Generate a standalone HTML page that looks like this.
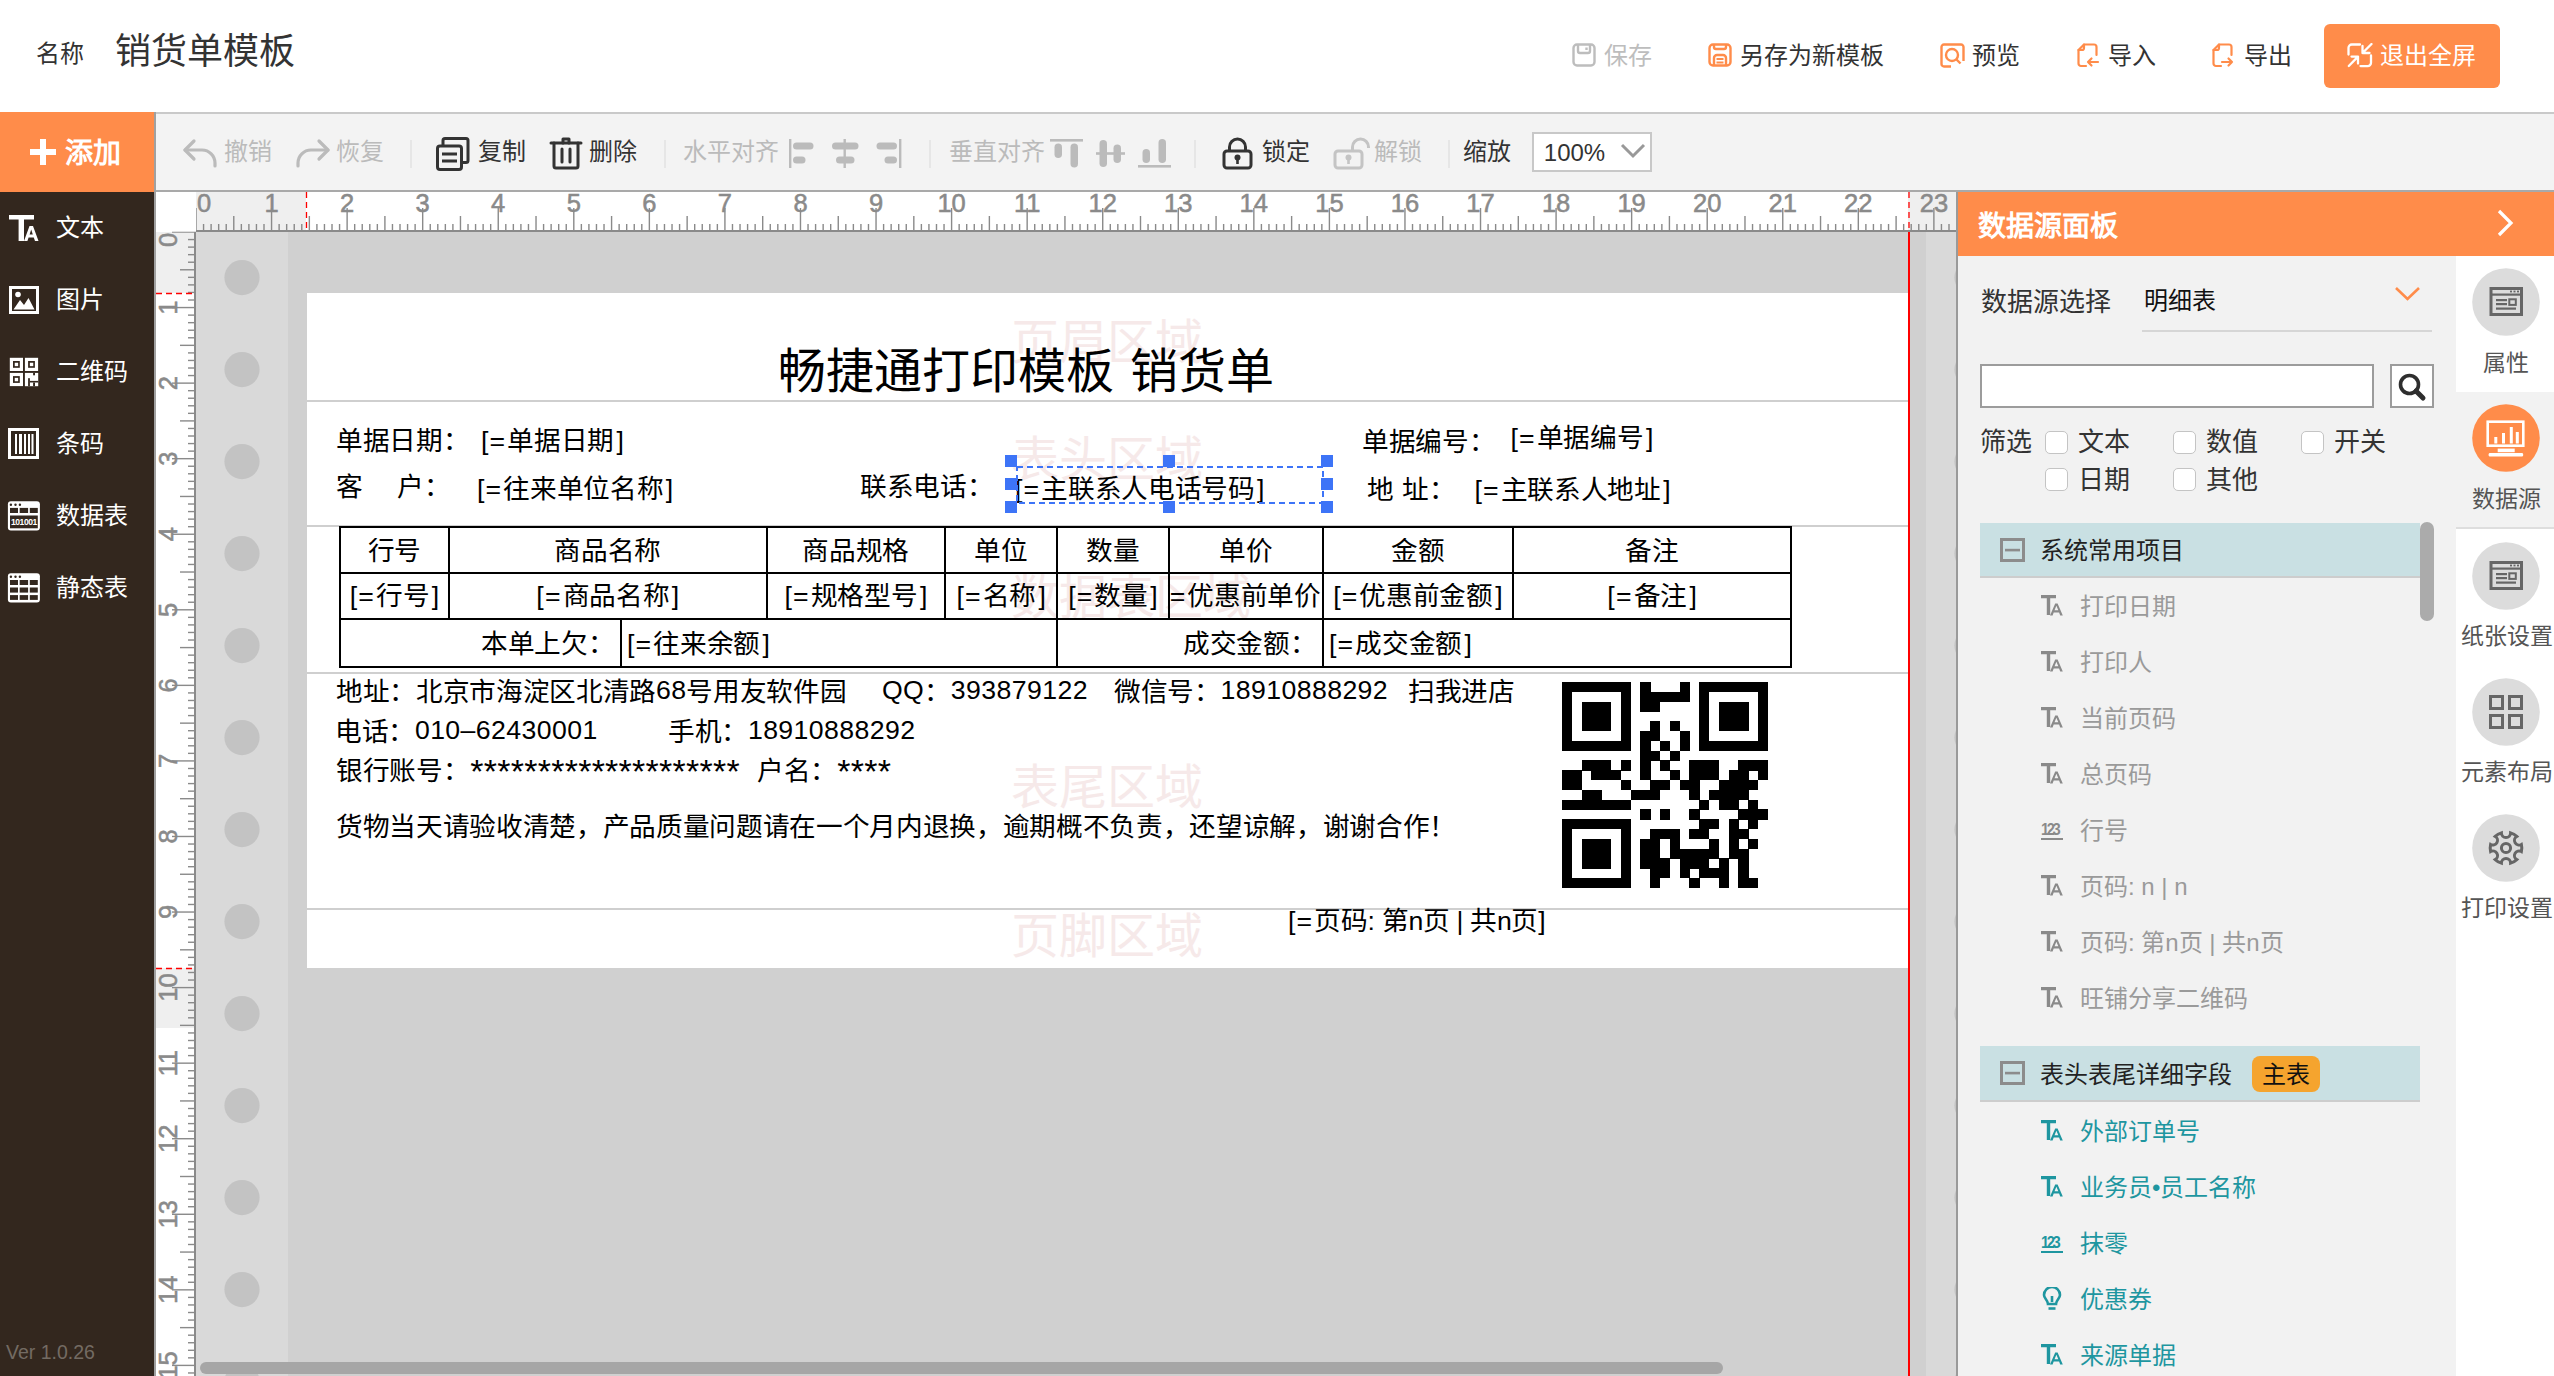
<!DOCTYPE html>
<html lang="zh-CN"><head><meta charset="utf-8"><title>销货单模板</title>
<style>
html,body{margin:0;padding:0;}
body{width:2554px;height:1376px;overflow:hidden;position:relative;background:#fff;font-family:"Liberation Sans",sans-serif;}
body>div,body>svg{position:absolute;}
.t{position:absolute;line-height:1;white-space:nowrap;}
.p{letter-spacing:-0.33px;}
</style></head><body>
<div style="left:0px;top:0px;width:2554px;height:112px;background:#fff;"></div>
<div style="left:0px;top:112px;width:2554px;height:2px;background:#c9c9c9;"></div>
<div style="left:0px;top:114px;width:2554px;height:76px;background:#f3f3f3;"></div>
<div style="left:0px;top:190px;width:2554px;height:2px;background:#a9a9a9;"></div>
<div style="left:0px;top:112px;width:154px;height:80px;background:#ff8c4a;"></div>
<div style="left:0px;top:192px;width:154px;height:1184px;background:#33271e;"></div>
<div style="left:154px;top:112px;width:2px;height:1264px;background:#a0a0a0;"></div>
<div class="t" style="left:36.0px;top:42.0px;font-size:24px;color:#333;">名称</div>
<div class="t" style="left:114.6px;top:34.0px;font-size:36px;color:#333;">销货单模板</div>
<svg style="position:absolute;left:1572px;top:43px;" width="24" height="24" viewBox="0 0 24 24"><g fill="none" stroke="#bdbdbd" stroke-width="2.4" stroke-linejoin="round"><rect x="1.5" y="1.5" width="21" height="21" rx="3.5"/><path d="M6 1.5 V8 a2 2 0 0 0 2 2 H16 a2 2 0 0 0 2 -2 V1.5"/><path d="M14.5 4.5 V7"/></g></svg>
<div class="t" style="left:1604.0px;top:44.0px;font-size:24px;color:#bdbdbd;">保存</div>
<svg style="position:absolute;left:1708px;top:43px;" width="24" height="24" viewBox="0 0 24 24"><g fill="none" stroke="#ff8c4a" stroke-width="2.4" stroke-linejoin="round"><rect x="1.5" y="1.5" width="21" height="21" rx="3.5"/><path d="M6 1.5 V4 a2 2 0 0 0 2 2 H16 a2 2 0 0 0 2 -2 V1.5"/><path d="M6 22.5 V15 a3 3 0 0 1 3 -3 H15 a3 3 0 0 1 3 3 V22.5"/><path d="M8.5 16 H15.5 M8.5 19.5 H15.5" stroke-width="2"/></g></svg>
<div class="t" style="left:1740.0px;top:44.0px;font-size:24px;color:#333;">另存为新模板</div>
<svg style="position:absolute;left:1940px;top:43px;" width="25" height="25" viewBox="0 0 25 25"><g fill="none" stroke="#ff8c4a" stroke-width="2.4"><path d="M11 23.5 H4 a2.5 2.5 0 0 1 -2.5 -2.5 V4 a2.5 2.5 0 0 1 2.5 -2.5 H21 a2.5 2.5 0 0 1 2.5 2.5 V18"/><circle cx="12" cy="12" r="6"/><path d="M16.5 16.5 L20.5 20.5"/></g></svg>
<div class="t" style="left:1972.0px;top:44.0px;font-size:24px;color:#333;">预览</div>
<svg style="position:absolute;left:2077px;top:43px;" width="24" height="25" viewBox="0 0 24 25"><g fill="none" stroke="#ff8c4a" stroke-width="2.2" stroke-linejoin="round" stroke-linecap="round"><path d="M9 23 H4 a2.5 2.5 0 0 1 -2.5 -2.5 V7 L7 1.5 H17 a2.5 2.5 0 0 1 2.5 2.5 V12"/><path d="M7 1.5 V5 a2 2 0 0 1 -2 2 H1.5"/><path d="M21 19 H11 M14.5 15.5 L11 19 L14.5 22.5"/></g></svg>
<div class="t" style="left:2108.0px;top:44.0px;font-size:24px;color:#333;">导入</div>
<svg style="position:absolute;left:2212px;top:43px;" width="24" height="25" viewBox="0 0 24 25"><g fill="none" stroke="#ff8c4a" stroke-width="2.2" stroke-linejoin="round" stroke-linecap="round"><path d="M9 23 H4 a2.5 2.5 0 0 1 -2.5 -2.5 V7 L7 1.5 H17 a2.5 2.5 0 0 1 2.5 2.5 V12"/><path d="M7 1.5 V5 a2 2 0 0 1 -2 2 H1.5"/><path d="M10 19 H20 M16.5 15.5 L20 19 L16.5 22.5"/></g></svg>
<div class="t" style="left:2244.0px;top:44.0px;font-size:24px;color:#333;">导出</div>
<div style="left:2324px;top:24px;width:176px;height:64px;background:#ff8c4a;border-radius:6px;"></div>
<svg style="position:absolute;left:2347px;top:43px;" width="26" height="25" viewBox="0 0 26 25"><g fill="none" stroke="#fff" stroke-width="2.3" stroke-linecap="round" stroke-linejoin="round"><path d="M1.5 11.5 V4.8 a3.3 3.3 0 0 1 3.3 -3.3 H13"/><path d="M24 12.5 V19.8 a3.3 3.3 0 0 1 -3.3 3.3 H13.5"/><path d="M24.5 1 L15.5 10 M15.5 3 V10 H22.5"/><path d="M1.8 23 L11 13.6 M4.5 13.6 H11 V20.5"/></g></svg>
<div class="t" style="left:2380.0px;top:44.0px;font-size:24px;color:#fff;">退出全屏</div>
<svg style="position:absolute;left:30px;top:139px;" width="26" height="26" viewBox="0 0 26 26"><path d="M10 0 H16 V10 H26 V16 H16 V26 H10 V16 H0 V10 H10 Z" fill="#fff"/></svg>
<div class="t" style="left:64.9px;top:140.0px;font-size:28px;color:#fff;font-weight:bold;">添加</div>
<svg style="position:absolute;left:182px;top:138px;" width="38" height="32" viewBox="0 0 38 32"><g fill="none" stroke="#bbbbbb" stroke-width="3.2" stroke-linecap="round" stroke-linejoin="round"><path d="M12 3 L3 12 L12 21"/><path d="M3 12 H20 a13 13 0 0 1 13 13 V28"/></g></svg>
<div class="t" style="left:224.0px;top:140.0px;font-size:24px;color:#bbbbbb;">撤销</div>
<svg style="position:absolute;left:295px;top:138px;" width="38" height="32" viewBox="0 0 38 32"><g fill="none" stroke="#bbbbbb" stroke-width="3.2" stroke-linecap="round" stroke-linejoin="round"><path d="M24 3 L33 12 L24 21"/><path d="M33 12 H16 a13 13 0 0 0 -13 13 V28"/></g></svg>
<div class="t" style="left:336.0px;top:140.0px;font-size:24px;color:#bbbbbb;">恢复</div>
<div style="left:410px;top:140px;width:2px;height:28px;background:#e6e6e6;"></div>
<svg style="position:absolute;left:436px;top:137px;" width="34" height="34" viewBox="0 0 34 34"><g fill="none" stroke="#333333" stroke-width="3" stroke-linejoin="round"><rect x="1.5" y="9" width="24" height="23.5" rx="2.5"/><path d="M7 9 V3.5 a2 2 0 0 1 2 -2 H30 a2 2 0 0 1 2 2 V23.5 a2 2 0 0 1 -2 2 H25.5"/><path d="M6 17 H21 M6 24 H21"/></g></svg>
<div class="t" style="left:478.0px;top:140.0px;font-size:24px;color:#333333;">复制</div>
<svg style="position:absolute;left:549px;top:137px;" width="34" height="33" viewBox="0 0 34 33"><g fill="none" stroke="#333333" stroke-width="3" stroke-linejoin="round" stroke-linecap="round"><path d="M2 6 H32"/><path d="M14 6 V2 H20 V6"/><path d="M5 6 V29 a2 2 0 0 0 2 2 H27 a2 2 0 0 0 2 -2 V6"/><path d="M13 12 V25 M21 12 V25"/></g></svg>
<div class="t" style="left:589.0px;top:140.0px;font-size:24px;color:#333333;">删除</div>
<div style="left:664px;top:140px;width:2px;height:28px;background:#e6e6e6;"></div>
<div class="t" style="left:683.0px;top:140.0px;font-size:24px;color:#bbbbbb;">水平对齐</div>
<svg style="position:absolute;left:788px;top:138px;" width="28" height="32" viewBox="0 0 28 32"><g fill="#bbbbbb"><rect x="1" y="1" width="2.4" height="29"/><rect x="5" y="4.5" width="20.5" height="7" rx="3.5"/><rect x="5" y="18.5" width="12.5" height="7" rx="3.5"/></g></svg>
<svg style="position:absolute;left:830px;top:138px;" width="30" height="32" viewBox="0 0 30 32"><g fill="#bbbbbb"><rect x="13.5" y="1" width="2.4" height="29"/><rect x="2" y="4.5" width="26.5" height="7" rx="3.5"/><rect x="6" y="18.5" width="18.5" height="7" rx="3.5"/></g></svg>
<svg style="position:absolute;left:875px;top:138px;" width="28" height="32" viewBox="0 0 28 32"><g fill="#bbbbbb"><rect x="24" y="1" width="2.4" height="29"/><rect x="1.5" y="4.5" width="20.5" height="7" rx="3.5"/><rect x="9.5" y="18.5" width="12.5" height="7" rx="3.5"/></g></svg>
<div style="left:929px;top:140px;width:2px;height:28px;background:#e6e6e6;"></div>
<div class="t" style="left:949.0px;top:140.0px;font-size:24px;color:#bbbbbb;">垂直对齐</div>
<svg style="position:absolute;left:1049px;top:138px;" width="36" height="32" viewBox="0 0 36 32"><g fill="#bbbbbb"><rect x="1" y="1" width="33" height="2.6"/><rect x="5.5" y="5.5" width="7.5" height="14.5" rx="3.75"/><rect x="21.5" y="5.5" width="7.5" height="24" rx="3.75"/></g></svg>
<svg style="position:absolute;left:1095px;top:138px;" width="32" height="32" viewBox="0 0 32 32"><g fill="#bbbbbb"><rect x="1" y="14.2" width="29" height="2.6"/><rect x="4.5" y="2" width="7.5" height="27" rx="3.75"/><rect x="18.5" y="6.5" width="7.5" height="18.5" rx="3.75"/></g></svg>
<svg style="position:absolute;left:1137px;top:138px;" width="36" height="32" viewBox="0 0 36 32"><g fill="#bbbbbb"><rect x="1" y="27" width="33" height="2.6"/><rect x="5.5" y="11" width="7.5" height="14" rx="3.75"/><rect x="21.5" y="1" width="7.5" height="24" rx="3.75"/></g></svg>
<div style="left:1194px;top:140px;width:2px;height:28px;background:#e6e6e6;"></div>
<svg style="position:absolute;left:1222px;top:137px;" width="32" height="33" viewBox="0 0 32 33"><g fill="none" stroke="#333333" stroke-width="3" stroke-linejoin="round"><rect x="2" y="14" width="27" height="17" rx="3"/><path d="M7.5 14 V10 a8 8 0 0 1 16 0 V14"/></g><circle cx="15.5" cy="20.5" r="3" fill="#333333"/><rect x="14.2" y="21" width="2.6" height="6" fill="#333333"/></svg>
<div class="t" style="left:1262.0px;top:140.0px;font-size:24px;color:#333333;">锁定</div>
<svg style="position:absolute;left:1333px;top:137px;" width="37" height="33" viewBox="0 0 37 33"><g fill="none" stroke="#c4c4c4" stroke-width="3" stroke-linejoin="round"><rect x="2" y="14" width="27" height="17" rx="3"/><path d="M19.5 14 V10 a8 8 0 0 1 16 0 V11"/></g><circle cx="15.5" cy="20.5" r="3" fill="#c4c4c4"/><rect x="14.2" y="21" width="2.6" height="6" fill="#c4c4c4"/></svg>
<div class="t" style="left:1374.0px;top:140.0px;font-size:24px;color:#bbbbbb;">解锁</div>
<div style="left:1448px;top:140px;width:2px;height:28px;background:#e6e6e6;"></div>
<div class="t" style="left:1463.0px;top:140.0px;font-size:24px;color:#333333;">缩放</div>
<div style="left:1532px;top:132px;width:120px;height:40px;background:#fff;box-sizing:border-box;border:2px solid #c8c8c8;"></div>
<div class="t" style="left:1543.8px;top:140.9px;font-size:24px;color:#333333;">100%</div>
<svg style="position:absolute;left:1620px;top:143px;" width="26" height="16" viewBox="0 0 26 16"><path d="M2 2 L13 13 L24 2" fill="none" stroke="#999" stroke-width="3"/></svg>
<svg style="position:absolute;left:9px;top:215px;" width="32" height="28" viewBox="0 0 32 28"><g fill="#ffffff" transform="scale(1.0)"><path d="M0 0 H25 V4.6 H15 V26 H9.6 V4.6 H0 Z"/><path d="M20.5 11 H24 L29.5 26 H26 L24.8 22.5 H19.6 L18.4 26 H15 Z M20.6 19.5 H23.8 L22.2 14.6 Z"/></g></svg>
<div class="t" style="left:56.0px;top:216.0px;font-size:24px;color:#ffffff;">文本</div>
<svg style="position:absolute;left:9px;top:286px;" width="31" height="29" viewBox="0 0 31 29"><g fill="none" stroke="#ffffff" stroke-width="3"><rect x="1.5" y="1.5" width="27" height="25"/></g><circle cx="9" cy="8.5" r="2.8" fill="#ffffff"/><path d="M4.5 23.5 L11 14 L15 19 L19.5 12 L25.5 23.5 Z" fill="#ffffff"/></svg>
<div class="t" style="left:56.0px;top:288.0px;font-size:24px;color:#ffffff;">图片</div>
<svg style="position:absolute;left:9px;top:357px;" width="31" height="31" viewBox="0 0 31 31"><rect x="0.8" y="0.8" width="13.2" height="13.2" fill="#fff"/><rect x="4.0" y="4.0" width="6.8" height="6.8" fill="#33271e"/><rect x="5.75" y="5.75" width="3.4" height="3.4" fill="#fff"/><rect x="15.9" y="0.8" width="13.2" height="13.2" fill="#fff"/><rect x="19.1" y="4.0" width="6.8" height="6.8" fill="#33271e"/><rect x="20.85" y="5.75" width="3.4" height="3.4" fill="#fff"/><rect x="0.8" y="15.9" width="13.2" height="13.2" fill="#fff"/><rect x="4.0" y="19.1" width="6.8" height="6.8" fill="#33271e"/><rect x="5.75" y="20.85" width="3.4" height="3.4" fill="#fff"/><rect x="15.9" y="15.9" width="13.3" height="13.3" fill="#fff"/><g fill="#33271e"><rect x="24.1" y="15.9" width="1.9" height="2.4"/><rect x="19.1" y="21.2" width="1.8" height="8"/><rect x="20.9" y="23.9" width="8.3" height="1.6"/><rect x="24.1" y="25.5" width="1.9" height="3.7"/></g></svg>
<div class="t" style="left:56.0px;top:360.0px;font-size:24px;color:#ffffff;">二维码</div>
<svg style="position:absolute;left:8px;top:428px;" width="32" height="32" viewBox="0 0 32 32"><g fill="none" stroke="#ffffff" stroke-width="3"><rect x="1.5" y="1.5" width="28" height="28"/></g><g fill="#ffffff"><rect x="7" y="6" width="2" height="20"/><rect x="11" y="6" width="3" height="20"/><rect x="16" y="6" width="2" height="20"/><rect x="20" y="6" width="2" height="20"/><rect x="23.5" y="6" width="2" height="20"/></g></svg>
<div class="t" style="left:56.0px;top:432.0px;font-size:24px;color:#ffffff;">条码</div>
<svg style="position:absolute;left:7px;top:500px;" width="34" height="32" viewBox="0 0 34 32"><rect x="0.9" y="1.2" width="32" height="29.4" rx="3" fill="#fff"/><g fill="#33271e"><circle cx="3.9" cy="4.8" r="1.2"/><circle cx="8.5" cy="4.8" r="1.2"/><circle cx="12.9" cy="4.8" r="1.2"/><rect x="3.0" y="7.9" width="8.0" height="5.1"/><rect x="12.7" y="7.9" width="8.400000000000002" height="5.1"/><rect x="22.8" y="7.9" width="8.0" height="5.1"/><rect x="3.0" y="15.5" width="27.8" height="12.8"/></g><text x="16.9" y="25.4" font-size="8.6" font-weight="bold" fill="#fff" text-anchor="middle" letter-spacing="-0.45" font-family="Liberation Sans">101001</text></svg>
<div class="t" style="left:56.0px;top:504.0px;font-size:24px;color:#ffffff;">数据表</div>
<svg style="position:absolute;left:7px;top:572px;" width="34" height="32" viewBox="0 0 34 32"><rect x="0.9" y="1.2" width="32" height="29.4" rx="3" fill="#fff"/><g fill="#33271e"><circle cx="3.9" cy="4.8" r="1.2"/><circle cx="8.5" cy="4.8" r="1.2"/><circle cx="12.9" cy="4.8" r="1.2"/><rect x="3.0" y="8.0" width="8.0" height="5.0"/><rect x="12.7" y="8.0" width="8.400000000000002" height="5.0"/><rect x="22.8" y="8.0" width="8.0" height="5.0"/><rect x="3.0" y="15.5" width="8.0" height="5.100000000000001"/><rect x="12.7" y="15.5" width="8.400000000000002" height="5.100000000000001"/><rect x="22.8" y="15.5" width="8.0" height="5.100000000000001"/><rect x="3.0" y="23.1" width="8.0" height="4.799999999999997"/><rect x="12.7" y="23.1" width="8.400000000000002" height="4.799999999999997"/><rect x="22.8" y="23.1" width="8.0" height="4.799999999999997"/></g></svg>
<div class="t" style="left:56.0px;top:576.0px;font-size:24px;color:#ffffff;">静态表</div>
<div class="t" style="left:6.0px;top:1342.8px;font-size:19.5px;color:#736b63;">Ver 1.0.26</div>
<div style="left:156px;top:192px;width:1800px;height:1184px;background:#d0d0d0;"></div>
<div style="left:196px;top:232px;width:92px;height:1144px;background:#d9d9d9;"></div>
<div style="left:1926px;top:232px;width:30px;height:1144px;background:#d9d9d9;"></div>
<svg style="position:absolute;left:196px;top:232px;" width="92" height="1144" viewBox="0 0 92 1144"><circle cx="46" cy="45.6" r="17.6" fill="#c3c3c3"/><circle cx="46" cy="137.6" r="17.6" fill="#c3c3c3"/><circle cx="46" cy="229.6" r="17.6" fill="#c3c3c3"/><circle cx="46" cy="321.6" r="17.6" fill="#c3c3c3"/><circle cx="46" cy="413.6" r="17.6" fill="#c3c3c3"/><circle cx="46" cy="505.6" r="17.6" fill="#c3c3c3"/><circle cx="46" cy="597.6" r="17.6" fill="#c3c3c3"/><circle cx="46" cy="689.6" r="17.6" fill="#c3c3c3"/><circle cx="46" cy="781.6" r="17.6" fill="#c3c3c3"/><circle cx="46" cy="873.6" r="17.6" fill="#c3c3c3"/><circle cx="46" cy="965.6" r="17.6" fill="#c3c3c3"/><circle cx="46" cy="1057.6" r="17.6" fill="#c3c3c3"/><circle cx="46" cy="1149.6" r="17.6" fill="#c3c3c3"/></svg>
<svg style="position:absolute;left:1926px;top:232px;overflow:hidden;" width="30" height="1144" viewBox="0 0 30 1144"><circle cx="46" cy="45.6" r="17.6" fill="#c3c3c3"/><circle cx="46" cy="137.6" r="17.6" fill="#c3c3c3"/><circle cx="46" cy="229.6" r="17.6" fill="#c3c3c3"/><circle cx="46" cy="321.6" r="17.6" fill="#c3c3c3"/><circle cx="46" cy="413.6" r="17.6" fill="#c3c3c3"/><circle cx="46" cy="505.6" r="17.6" fill="#c3c3c3"/><circle cx="46" cy="597.6" r="17.6" fill="#c3c3c3"/><circle cx="46" cy="689.6" r="17.6" fill="#c3c3c3"/><circle cx="46" cy="781.6" r="17.6" fill="#c3c3c3"/><circle cx="46" cy="873.6" r="17.6" fill="#c3c3c3"/><circle cx="46" cy="965.6" r="17.6" fill="#c3c3c3"/><circle cx="46" cy="1057.6" r="17.6" fill="#c3c3c3"/><circle cx="46" cy="1149.6" r="17.6" fill="#c3c3c3"/></svg>
<div style="left:307px;top:293px;width:1601px;height:675px;background:#fff;"></div>
<div class="t" style="left:1011.1px;top:319.0px;font-size:48px;color:#f6e9e9;">页眉区域</div>
<div class="t" style="left:1011.1px;top:436.0px;font-size:48px;color:#f6e9e9;">表头区域</div>
<div class="t" style="left:1011.1px;top:574.0px;font-size:48px;color:#f6e9e9;">数据表区域</div>
<div class="t" style="left:1011.1px;top:764.0px;font-size:48px;color:#f6e9e9;">表尾区域</div>
<div class="t" style="left:1011.1px;top:913.0px;font-size:48px;color:#f6e9e9;">页脚区域</div>
<div style="left:307px;top:400px;width:1601px;height:2px;background:#cfcfcf;"></div>
<div style="left:307px;top:525px;width:1601px;height:2px;background:#cfcfcf;"></div>
<div style="left:307px;top:672px;width:1601px;height:2px;background:#cfcfcf;"></div>
<div style="left:307px;top:908px;width:1601px;height:2px;background:#cfcfcf;"></div>
<div style="left:339px;top:525.8px;width:1453.3px;height:2px;background:#000;"></div>
<div style="left:339px;top:572px;width:1453.3px;height:2px;background:#000;"></div>
<div style="left:339px;top:618px;width:1453.3px;height:2px;background:#000;"></div>
<div style="left:339px;top:666px;width:1453.3px;height:2px;background:#000;"></div>
<div style="left:339px;top:525.8px;width:2px;height:142.20000000000005px;background:#000;"></div>
<div style="left:1790.3px;top:525.8px;width:2px;height:142.20000000000005px;background:#000;"></div>
<div style="left:447.6px;top:525.8px;width:2px;height:92.20000000000005px;background:#000;"></div>
<div style="left:765.6px;top:525.8px;width:2px;height:92.20000000000005px;background:#000;"></div>
<div style="left:944px;top:525.8px;width:2px;height:92.20000000000005px;background:#000;"></div>
<div style="left:1056px;top:525.8px;width:2px;height:92.20000000000005px;background:#000;"></div>
<div style="left:1167.5px;top:525.8px;width:2px;height:92.20000000000005px;background:#000;"></div>
<div style="left:1322px;top:525.8px;width:2px;height:92.20000000000005px;background:#000;"></div>
<div style="left:1511.6px;top:525.8px;width:2px;height:92.20000000000005px;background:#000;"></div>
<div style="left:619.6px;top:618px;width:2px;height:48px;background:#000;"></div>
<div style="left:1056px;top:618px;width:2px;height:48px;background:#000;"></div>
<div style="left:1322px;top:618px;width:2px;height:48px;background:#000;"></div>
<svg style="position:absolute;left:156px;top:192px;" width="1800" height="40" viewBox="0 0 1800 40"><rect x="0" y="0" width="1800" height="40" fill="#fff"/><rect x="40" y="0" width="110" height="38" fill="#efefef"/><rect x="1752" y="0" width="48" height="38" fill="#efefef"/><rect x="40" y="38" width="1760" height="2" fill="#8a8a8a"/><rect x="39.30" y="16" width="1.4" height="22" fill="#8a8a8a"/><rect x="46.86" y="32" width="1.4" height="6" fill="#8a8a8a"/><rect x="54.41" y="32" width="1.4" height="6" fill="#8a8a8a"/><rect x="61.97" y="32" width="1.4" height="6" fill="#8a8a8a"/><rect x="69.52" y="32" width="1.4" height="6" fill="#8a8a8a"/><rect x="77.08" y="24" width="1.4" height="14" fill="#8a8a8a"/><rect x="84.64" y="32" width="1.4" height="6" fill="#8a8a8a"/><rect x="92.19" y="32" width="1.4" height="6" fill="#8a8a8a"/><rect x="99.75" y="32" width="1.4" height="6" fill="#8a8a8a"/><rect x="107.30" y="32" width="1.4" height="6" fill="#8a8a8a"/><rect x="114.86" y="16" width="1.4" height="22" fill="#8a8a8a"/><rect x="122.42" y="32" width="1.4" height="6" fill="#8a8a8a"/><rect x="129.97" y="32" width="1.4" height="6" fill="#8a8a8a"/><rect x="137.53" y="32" width="1.4" height="6" fill="#8a8a8a"/><rect x="145.08" y="32" width="1.4" height="6" fill="#8a8a8a"/><rect x="152.64" y="24" width="1.4" height="14" fill="#8a8a8a"/><rect x="160.20" y="32" width="1.4" height="6" fill="#8a8a8a"/><rect x="167.75" y="32" width="1.4" height="6" fill="#8a8a8a"/><rect x="175.31" y="32" width="1.4" height="6" fill="#8a8a8a"/><rect x="182.86" y="32" width="1.4" height="6" fill="#8a8a8a"/><rect x="190.42" y="16" width="1.4" height="22" fill="#8a8a8a"/><rect x="197.98" y="32" width="1.4" height="6" fill="#8a8a8a"/><rect x="205.53" y="32" width="1.4" height="6" fill="#8a8a8a"/><rect x="213.09" y="32" width="1.4" height="6" fill="#8a8a8a"/><rect x="220.64" y="32" width="1.4" height="6" fill="#8a8a8a"/><rect x="228.20" y="24" width="1.4" height="14" fill="#8a8a8a"/><rect x="235.76" y="32" width="1.4" height="6" fill="#8a8a8a"/><rect x="243.31" y="32" width="1.4" height="6" fill="#8a8a8a"/><rect x="250.87" y="32" width="1.4" height="6" fill="#8a8a8a"/><rect x="258.42" y="32" width="1.4" height="6" fill="#8a8a8a"/><rect x="265.98" y="16" width="1.4" height="22" fill="#8a8a8a"/><rect x="273.54" y="32" width="1.4" height="6" fill="#8a8a8a"/><rect x="281.09" y="32" width="1.4" height="6" fill="#8a8a8a"/><rect x="288.65" y="32" width="1.4" height="6" fill="#8a8a8a"/><rect x="296.20" y="32" width="1.4" height="6" fill="#8a8a8a"/><rect x="303.76" y="24" width="1.4" height="14" fill="#8a8a8a"/><rect x="311.32" y="32" width="1.4" height="6" fill="#8a8a8a"/><rect x="318.87" y="32" width="1.4" height="6" fill="#8a8a8a"/><rect x="326.43" y="32" width="1.4" height="6" fill="#8a8a8a"/><rect x="333.98" y="32" width="1.4" height="6" fill="#8a8a8a"/><rect x="341.54" y="16" width="1.4" height="22" fill="#8a8a8a"/><rect x="349.10" y="32" width="1.4" height="6" fill="#8a8a8a"/><rect x="356.65" y="32" width="1.4" height="6" fill="#8a8a8a"/><rect x="364.21" y="32" width="1.4" height="6" fill="#8a8a8a"/><rect x="371.76" y="32" width="1.4" height="6" fill="#8a8a8a"/><rect x="379.32" y="24" width="1.4" height="14" fill="#8a8a8a"/><rect x="386.88" y="32" width="1.4" height="6" fill="#8a8a8a"/><rect x="394.43" y="32" width="1.4" height="6" fill="#8a8a8a"/><rect x="401.99" y="32" width="1.4" height="6" fill="#8a8a8a"/><rect x="409.54" y="32" width="1.4" height="6" fill="#8a8a8a"/><rect x="417.10" y="16" width="1.4" height="22" fill="#8a8a8a"/><rect x="424.66" y="32" width="1.4" height="6" fill="#8a8a8a"/><rect x="432.21" y="32" width="1.4" height="6" fill="#8a8a8a"/><rect x="439.77" y="32" width="1.4" height="6" fill="#8a8a8a"/><rect x="447.32" y="32" width="1.4" height="6" fill="#8a8a8a"/><rect x="454.88" y="24" width="1.4" height="14" fill="#8a8a8a"/><rect x="462.44" y="32" width="1.4" height="6" fill="#8a8a8a"/><rect x="469.99" y="32" width="1.4" height="6" fill="#8a8a8a"/><rect x="477.55" y="32" width="1.4" height="6" fill="#8a8a8a"/><rect x="485.10" y="32" width="1.4" height="6" fill="#8a8a8a"/><rect x="492.66" y="16" width="1.4" height="22" fill="#8a8a8a"/><rect x="500.22" y="32" width="1.4" height="6" fill="#8a8a8a"/><rect x="507.77" y="32" width="1.4" height="6" fill="#8a8a8a"/><rect x="515.33" y="32" width="1.4" height="6" fill="#8a8a8a"/><rect x="522.88" y="32" width="1.4" height="6" fill="#8a8a8a"/><rect x="530.44" y="24" width="1.4" height="14" fill="#8a8a8a"/><rect x="538.00" y="32" width="1.4" height="6" fill="#8a8a8a"/><rect x="545.55" y="32" width="1.4" height="6" fill="#8a8a8a"/><rect x="553.11" y="32" width="1.4" height="6" fill="#8a8a8a"/><rect x="560.66" y="32" width="1.4" height="6" fill="#8a8a8a"/><rect x="568.22" y="16" width="1.4" height="22" fill="#8a8a8a"/><rect x="575.78" y="32" width="1.4" height="6" fill="#8a8a8a"/><rect x="583.33" y="32" width="1.4" height="6" fill="#8a8a8a"/><rect x="590.89" y="32" width="1.4" height="6" fill="#8a8a8a"/><rect x="598.44" y="32" width="1.4" height="6" fill="#8a8a8a"/><rect x="606.00" y="24" width="1.4" height="14" fill="#8a8a8a"/><rect x="613.56" y="32" width="1.4" height="6" fill="#8a8a8a"/><rect x="621.11" y="32" width="1.4" height="6" fill="#8a8a8a"/><rect x="628.67" y="32" width="1.4" height="6" fill="#8a8a8a"/><rect x="636.22" y="32" width="1.4" height="6" fill="#8a8a8a"/><rect x="643.78" y="16" width="1.4" height="22" fill="#8a8a8a"/><rect x="651.34" y="32" width="1.4" height="6" fill="#8a8a8a"/><rect x="658.89" y="32" width="1.4" height="6" fill="#8a8a8a"/><rect x="666.45" y="32" width="1.4" height="6" fill="#8a8a8a"/><rect x="674.00" y="32" width="1.4" height="6" fill="#8a8a8a"/><rect x="681.56" y="24" width="1.4" height="14" fill="#8a8a8a"/><rect x="689.12" y="32" width="1.4" height="6" fill="#8a8a8a"/><rect x="696.67" y="32" width="1.4" height="6" fill="#8a8a8a"/><rect x="704.23" y="32" width="1.4" height="6" fill="#8a8a8a"/><rect x="711.78" y="32" width="1.4" height="6" fill="#8a8a8a"/><rect x="719.34" y="16" width="1.4" height="22" fill="#8a8a8a"/><rect x="726.90" y="32" width="1.4" height="6" fill="#8a8a8a"/><rect x="734.45" y="32" width="1.4" height="6" fill="#8a8a8a"/><rect x="742.01" y="32" width="1.4" height="6" fill="#8a8a8a"/><rect x="749.56" y="32" width="1.4" height="6" fill="#8a8a8a"/><rect x="757.12" y="24" width="1.4" height="14" fill="#8a8a8a"/><rect x="764.68" y="32" width="1.4" height="6" fill="#8a8a8a"/><rect x="772.23" y="32" width="1.4" height="6" fill="#8a8a8a"/><rect x="779.79" y="32" width="1.4" height="6" fill="#8a8a8a"/><rect x="787.34" y="32" width="1.4" height="6" fill="#8a8a8a"/><rect x="794.90" y="16" width="1.4" height="22" fill="#8a8a8a"/><rect x="802.46" y="32" width="1.4" height="6" fill="#8a8a8a"/><rect x="810.01" y="32" width="1.4" height="6" fill="#8a8a8a"/><rect x="817.57" y="32" width="1.4" height="6" fill="#8a8a8a"/><rect x="825.12" y="32" width="1.4" height="6" fill="#8a8a8a"/><rect x="832.68" y="24" width="1.4" height="14" fill="#8a8a8a"/><rect x="840.24" y="32" width="1.4" height="6" fill="#8a8a8a"/><rect x="847.79" y="32" width="1.4" height="6" fill="#8a8a8a"/><rect x="855.35" y="32" width="1.4" height="6" fill="#8a8a8a"/><rect x="862.90" y="32" width="1.4" height="6" fill="#8a8a8a"/><rect x="870.46" y="16" width="1.4" height="22" fill="#8a8a8a"/><rect x="878.02" y="32" width="1.4" height="6" fill="#8a8a8a"/><rect x="885.57" y="32" width="1.4" height="6" fill="#8a8a8a"/><rect x="893.13" y="32" width="1.4" height="6" fill="#8a8a8a"/><rect x="900.68" y="32" width="1.4" height="6" fill="#8a8a8a"/><rect x="908.24" y="24" width="1.4" height="14" fill="#8a8a8a"/><rect x="915.80" y="32" width="1.4" height="6" fill="#8a8a8a"/><rect x="923.35" y="32" width="1.4" height="6" fill="#8a8a8a"/><rect x="930.91" y="32" width="1.4" height="6" fill="#8a8a8a"/><rect x="938.46" y="32" width="1.4" height="6" fill="#8a8a8a"/><rect x="946.02" y="16" width="1.4" height="22" fill="#8a8a8a"/><rect x="953.58" y="32" width="1.4" height="6" fill="#8a8a8a"/><rect x="961.13" y="32" width="1.4" height="6" fill="#8a8a8a"/><rect x="968.69" y="32" width="1.4" height="6" fill="#8a8a8a"/><rect x="976.24" y="32" width="1.4" height="6" fill="#8a8a8a"/><rect x="983.80" y="24" width="1.4" height="14" fill="#8a8a8a"/><rect x="991.36" y="32" width="1.4" height="6" fill="#8a8a8a"/><rect x="998.91" y="32" width="1.4" height="6" fill="#8a8a8a"/><rect x="1006.47" y="32" width="1.4" height="6" fill="#8a8a8a"/><rect x="1014.02" y="32" width="1.4" height="6" fill="#8a8a8a"/><rect x="1021.58" y="16" width="1.4" height="22" fill="#8a8a8a"/><rect x="1029.14" y="32" width="1.4" height="6" fill="#8a8a8a"/><rect x="1036.69" y="32" width="1.4" height="6" fill="#8a8a8a"/><rect x="1044.25" y="32" width="1.4" height="6" fill="#8a8a8a"/><rect x="1051.80" y="32" width="1.4" height="6" fill="#8a8a8a"/><rect x="1059.36" y="24" width="1.4" height="14" fill="#8a8a8a"/><rect x="1066.92" y="32" width="1.4" height="6" fill="#8a8a8a"/><rect x="1074.47" y="32" width="1.4" height="6" fill="#8a8a8a"/><rect x="1082.03" y="32" width="1.4" height="6" fill="#8a8a8a"/><rect x="1089.58" y="32" width="1.4" height="6" fill="#8a8a8a"/><rect x="1097.14" y="16" width="1.4" height="22" fill="#8a8a8a"/><rect x="1104.70" y="32" width="1.4" height="6" fill="#8a8a8a"/><rect x="1112.25" y="32" width="1.4" height="6" fill="#8a8a8a"/><rect x="1119.81" y="32" width="1.4" height="6" fill="#8a8a8a"/><rect x="1127.36" y="32" width="1.4" height="6" fill="#8a8a8a"/><rect x="1134.92" y="24" width="1.4" height="14" fill="#8a8a8a"/><rect x="1142.48" y="32" width="1.4" height="6" fill="#8a8a8a"/><rect x="1150.03" y="32" width="1.4" height="6" fill="#8a8a8a"/><rect x="1157.59" y="32" width="1.4" height="6" fill="#8a8a8a"/><rect x="1165.14" y="32" width="1.4" height="6" fill="#8a8a8a"/><rect x="1172.70" y="16" width="1.4" height="22" fill="#8a8a8a"/><rect x="1180.26" y="32" width="1.4" height="6" fill="#8a8a8a"/><rect x="1187.81" y="32" width="1.4" height="6" fill="#8a8a8a"/><rect x="1195.37" y="32" width="1.4" height="6" fill="#8a8a8a"/><rect x="1202.92" y="32" width="1.4" height="6" fill="#8a8a8a"/><rect x="1210.48" y="24" width="1.4" height="14" fill="#8a8a8a"/><rect x="1218.04" y="32" width="1.4" height="6" fill="#8a8a8a"/><rect x="1225.59" y="32" width="1.4" height="6" fill="#8a8a8a"/><rect x="1233.15" y="32" width="1.4" height="6" fill="#8a8a8a"/><rect x="1240.70" y="32" width="1.4" height="6" fill="#8a8a8a"/><rect x="1248.26" y="16" width="1.4" height="22" fill="#8a8a8a"/><rect x="1255.82" y="32" width="1.4" height="6" fill="#8a8a8a"/><rect x="1263.37" y="32" width="1.4" height="6" fill="#8a8a8a"/><rect x="1270.93" y="32" width="1.4" height="6" fill="#8a8a8a"/><rect x="1278.48" y="32" width="1.4" height="6" fill="#8a8a8a"/><rect x="1286.04" y="24" width="1.4" height="14" fill="#8a8a8a"/><rect x="1293.60" y="32" width="1.4" height="6" fill="#8a8a8a"/><rect x="1301.15" y="32" width="1.4" height="6" fill="#8a8a8a"/><rect x="1308.71" y="32" width="1.4" height="6" fill="#8a8a8a"/><rect x="1316.26" y="32" width="1.4" height="6" fill="#8a8a8a"/><rect x="1323.82" y="16" width="1.4" height="22" fill="#8a8a8a"/><rect x="1331.38" y="32" width="1.4" height="6" fill="#8a8a8a"/><rect x="1338.93" y="32" width="1.4" height="6" fill="#8a8a8a"/><rect x="1346.49" y="32" width="1.4" height="6" fill="#8a8a8a"/><rect x="1354.04" y="32" width="1.4" height="6" fill="#8a8a8a"/><rect x="1361.60" y="24" width="1.4" height="14" fill="#8a8a8a"/><rect x="1369.16" y="32" width="1.4" height="6" fill="#8a8a8a"/><rect x="1376.71" y="32" width="1.4" height="6" fill="#8a8a8a"/><rect x="1384.27" y="32" width="1.4" height="6" fill="#8a8a8a"/><rect x="1391.82" y="32" width="1.4" height="6" fill="#8a8a8a"/><rect x="1399.38" y="16" width="1.4" height="22" fill="#8a8a8a"/><rect x="1406.94" y="32" width="1.4" height="6" fill="#8a8a8a"/><rect x="1414.49" y="32" width="1.4" height="6" fill="#8a8a8a"/><rect x="1422.05" y="32" width="1.4" height="6" fill="#8a8a8a"/><rect x="1429.60" y="32" width="1.4" height="6" fill="#8a8a8a"/><rect x="1437.16" y="24" width="1.4" height="14" fill="#8a8a8a"/><rect x="1444.72" y="32" width="1.4" height="6" fill="#8a8a8a"/><rect x="1452.27" y="32" width="1.4" height="6" fill="#8a8a8a"/><rect x="1459.83" y="32" width="1.4" height="6" fill="#8a8a8a"/><rect x="1467.38" y="32" width="1.4" height="6" fill="#8a8a8a"/><rect x="1474.94" y="16" width="1.4" height="22" fill="#8a8a8a"/><rect x="1482.50" y="32" width="1.4" height="6" fill="#8a8a8a"/><rect x="1490.05" y="32" width="1.4" height="6" fill="#8a8a8a"/><rect x="1497.61" y="32" width="1.4" height="6" fill="#8a8a8a"/><rect x="1505.16" y="32" width="1.4" height="6" fill="#8a8a8a"/><rect x="1512.72" y="24" width="1.4" height="14" fill="#8a8a8a"/><rect x="1520.28" y="32" width="1.4" height="6" fill="#8a8a8a"/><rect x="1527.83" y="32" width="1.4" height="6" fill="#8a8a8a"/><rect x="1535.39" y="32" width="1.4" height="6" fill="#8a8a8a"/><rect x="1542.94" y="32" width="1.4" height="6" fill="#8a8a8a"/><rect x="1550.50" y="16" width="1.4" height="22" fill="#8a8a8a"/><rect x="1558.06" y="32" width="1.4" height="6" fill="#8a8a8a"/><rect x="1565.61" y="32" width="1.4" height="6" fill="#8a8a8a"/><rect x="1573.17" y="32" width="1.4" height="6" fill="#8a8a8a"/><rect x="1580.72" y="32" width="1.4" height="6" fill="#8a8a8a"/><rect x="1588.28" y="24" width="1.4" height="14" fill="#8a8a8a"/><rect x="1595.84" y="32" width="1.4" height="6" fill="#8a8a8a"/><rect x="1603.39" y="32" width="1.4" height="6" fill="#8a8a8a"/><rect x="1610.95" y="32" width="1.4" height="6" fill="#8a8a8a"/><rect x="1618.50" y="32" width="1.4" height="6" fill="#8a8a8a"/><rect x="1626.06" y="16" width="1.4" height="22" fill="#8a8a8a"/><rect x="1633.62" y="32" width="1.4" height="6" fill="#8a8a8a"/><rect x="1641.17" y="32" width="1.4" height="6" fill="#8a8a8a"/><rect x="1648.73" y="32" width="1.4" height="6" fill="#8a8a8a"/><rect x="1656.28" y="32" width="1.4" height="6" fill="#8a8a8a"/><rect x="1663.84" y="24" width="1.4" height="14" fill="#8a8a8a"/><rect x="1671.40" y="32" width="1.4" height="6" fill="#8a8a8a"/><rect x="1678.95" y="32" width="1.4" height="6" fill="#8a8a8a"/><rect x="1686.51" y="32" width="1.4" height="6" fill="#8a8a8a"/><rect x="1694.06" y="32" width="1.4" height="6" fill="#8a8a8a"/><rect x="1701.62" y="16" width="1.4" height="22" fill="#8a8a8a"/><rect x="1709.18" y="32" width="1.4" height="6" fill="#8a8a8a"/><rect x="1716.73" y="32" width="1.4" height="6" fill="#8a8a8a"/><rect x="1724.29" y="32" width="1.4" height="6" fill="#8a8a8a"/><rect x="1731.84" y="32" width="1.4" height="6" fill="#8a8a8a"/><rect x="1739.40" y="24" width="1.4" height="14" fill="#8a8a8a"/><rect x="1746.96" y="32" width="1.4" height="6" fill="#8a8a8a"/><rect x="1754.51" y="32" width="1.4" height="6" fill="#8a8a8a"/><rect x="1762.07" y="32" width="1.4" height="6" fill="#8a8a8a"/><rect x="1769.62" y="32" width="1.4" height="6" fill="#8a8a8a"/><rect x="1777.18" y="16" width="1.4" height="22" fill="#8a8a8a"/><rect x="1784.74" y="32" width="1.4" height="6" fill="#8a8a8a"/><rect x="1792.29" y="32" width="1.4" height="6" fill="#8a8a8a"/><text x="41.0" y="19.6" font-size="25.5" fill="#8a8a8a" stroke="#8a8a8a" stroke-width="0.55" font-family="Liberation Sans">0</text><text x="115.6" y="19.6" font-size="25.5" fill="#8a8a8a" stroke="#8a8a8a" stroke-width="0.55" text-anchor="middle" font-family="Liberation Sans">1</text><text x="191.1" y="19.6" font-size="25.5" fill="#8a8a8a" stroke="#8a8a8a" stroke-width="0.55" text-anchor="middle" font-family="Liberation Sans">2</text><text x="266.7" y="19.6" font-size="25.5" fill="#8a8a8a" stroke="#8a8a8a" stroke-width="0.55" text-anchor="middle" font-family="Liberation Sans">3</text><text x="342.2" y="19.6" font-size="25.5" fill="#8a8a8a" stroke="#8a8a8a" stroke-width="0.55" text-anchor="middle" font-family="Liberation Sans">4</text><text x="417.8" y="19.6" font-size="25.5" fill="#8a8a8a" stroke="#8a8a8a" stroke-width="0.55" text-anchor="middle" font-family="Liberation Sans">5</text><text x="493.4" y="19.6" font-size="25.5" fill="#8a8a8a" stroke="#8a8a8a" stroke-width="0.55" text-anchor="middle" font-family="Liberation Sans">6</text><text x="568.9" y="19.6" font-size="25.5" fill="#8a8a8a" stroke="#8a8a8a" stroke-width="0.55" text-anchor="middle" font-family="Liberation Sans">7</text><text x="644.5" y="19.6" font-size="25.5" fill="#8a8a8a" stroke="#8a8a8a" stroke-width="0.55" text-anchor="middle" font-family="Liberation Sans">8</text><text x="720.0" y="19.6" font-size="25.5" fill="#8a8a8a" stroke="#8a8a8a" stroke-width="0.55" text-anchor="middle" font-family="Liberation Sans">9</text><text x="795.6" y="19.6" font-size="25.5" fill="#8a8a8a" stroke="#8a8a8a" stroke-width="0.55" text-anchor="middle" font-family="Liberation Sans">10</text><text x="871.2" y="19.6" font-size="25.5" fill="#8a8a8a" stroke="#8a8a8a" stroke-width="0.55" text-anchor="middle" font-family="Liberation Sans">11</text><text x="946.7" y="19.6" font-size="25.5" fill="#8a8a8a" stroke="#8a8a8a" stroke-width="0.55" text-anchor="middle" font-family="Liberation Sans">12</text><text x="1022.3" y="19.6" font-size="25.5" fill="#8a8a8a" stroke="#8a8a8a" stroke-width="0.55" text-anchor="middle" font-family="Liberation Sans">13</text><text x="1097.8" y="19.6" font-size="25.5" fill="#8a8a8a" stroke="#8a8a8a" stroke-width="0.55" text-anchor="middle" font-family="Liberation Sans">14</text><text x="1173.4" y="19.6" font-size="25.5" fill="#8a8a8a" stroke="#8a8a8a" stroke-width="0.55" text-anchor="middle" font-family="Liberation Sans">15</text><text x="1249.0" y="19.6" font-size="25.5" fill="#8a8a8a" stroke="#8a8a8a" stroke-width="0.55" text-anchor="middle" font-family="Liberation Sans">16</text><text x="1324.5" y="19.6" font-size="25.5" fill="#8a8a8a" stroke="#8a8a8a" stroke-width="0.55" text-anchor="middle" font-family="Liberation Sans">17</text><text x="1400.1" y="19.6" font-size="25.5" fill="#8a8a8a" stroke="#8a8a8a" stroke-width="0.55" text-anchor="middle" font-family="Liberation Sans">18</text><text x="1475.6" y="19.6" font-size="25.5" fill="#8a8a8a" stroke="#8a8a8a" stroke-width="0.55" text-anchor="middle" font-family="Liberation Sans">19</text><text x="1551.2" y="19.6" font-size="25.5" fill="#8a8a8a" stroke="#8a8a8a" stroke-width="0.55" text-anchor="middle" font-family="Liberation Sans">20</text><text x="1626.8" y="19.6" font-size="25.5" fill="#8a8a8a" stroke="#8a8a8a" stroke-width="0.55" text-anchor="middle" font-family="Liberation Sans">21</text><text x="1702.3" y="19.6" font-size="25.5" fill="#8a8a8a" stroke="#8a8a8a" stroke-width="0.55" text-anchor="middle" font-family="Liberation Sans">22</text><text x="1777.9" y="19.6" font-size="25.5" fill="#8a8a8a" stroke="#8a8a8a" stroke-width="0.55" text-anchor="middle" font-family="Liberation Sans">23</text><line x1="150.5" y1="0" x2="150.5" y2="38" stroke="#f00" stroke-width="1.3" stroke-dasharray="6 4"/><line x1="1753" y1="0" x2="1753" y2="38" stroke="#f00" stroke-width="1.3" stroke-dasharray="6 4"/></svg>
<svg style="position:absolute;left:156px;top:232px;" width="40" height="1144" viewBox="0 0 40 1144"><rect x="0" y="0" width="40" height="1144" fill="#fff"/><rect x="0" y="0" width="38" height="61" fill="#efefef"/><rect x="0" y="736" width="38" height="60" fill="#efefef"/><rect x="38" y="0" width="2" height="1144" fill="#8a8a8a"/><rect x="16" y="-0.70" width="23" height="1.4" fill="#8a8a8a"/><rect x="32" y="6.86" width="7" height="1.4" fill="#8a8a8a"/><rect x="32" y="14.41" width="7" height="1.4" fill="#8a8a8a"/><rect x="32" y="21.97" width="7" height="1.4" fill="#8a8a8a"/><rect x="32" y="29.52" width="7" height="1.4" fill="#8a8a8a"/><rect x="24" y="37.08" width="15" height="1.4" fill="#8a8a8a"/><rect x="32" y="44.64" width="7" height="1.4" fill="#8a8a8a"/><rect x="32" y="52.19" width="7" height="1.4" fill="#8a8a8a"/><rect x="32" y="59.75" width="7" height="1.4" fill="#8a8a8a"/><rect x="32" y="67.30" width="7" height="1.4" fill="#8a8a8a"/><rect x="16" y="74.86" width="23" height="1.4" fill="#8a8a8a"/><rect x="32" y="82.42" width="7" height="1.4" fill="#8a8a8a"/><rect x="32" y="89.97" width="7" height="1.4" fill="#8a8a8a"/><rect x="32" y="97.53" width="7" height="1.4" fill="#8a8a8a"/><rect x="32" y="105.08" width="7" height="1.4" fill="#8a8a8a"/><rect x="24" y="112.64" width="15" height="1.4" fill="#8a8a8a"/><rect x="32" y="120.20" width="7" height="1.4" fill="#8a8a8a"/><rect x="32" y="127.75" width="7" height="1.4" fill="#8a8a8a"/><rect x="32" y="135.31" width="7" height="1.4" fill="#8a8a8a"/><rect x="32" y="142.86" width="7" height="1.4" fill="#8a8a8a"/><rect x="16" y="150.42" width="23" height="1.4" fill="#8a8a8a"/><rect x="32" y="157.98" width="7" height="1.4" fill="#8a8a8a"/><rect x="32" y="165.53" width="7" height="1.4" fill="#8a8a8a"/><rect x="32" y="173.09" width="7" height="1.4" fill="#8a8a8a"/><rect x="32" y="180.64" width="7" height="1.4" fill="#8a8a8a"/><rect x="24" y="188.20" width="15" height="1.4" fill="#8a8a8a"/><rect x="32" y="195.76" width="7" height="1.4" fill="#8a8a8a"/><rect x="32" y="203.31" width="7" height="1.4" fill="#8a8a8a"/><rect x="32" y="210.87" width="7" height="1.4" fill="#8a8a8a"/><rect x="32" y="218.42" width="7" height="1.4" fill="#8a8a8a"/><rect x="16" y="225.98" width="23" height="1.4" fill="#8a8a8a"/><rect x="32" y="233.54" width="7" height="1.4" fill="#8a8a8a"/><rect x="32" y="241.09" width="7" height="1.4" fill="#8a8a8a"/><rect x="32" y="248.65" width="7" height="1.4" fill="#8a8a8a"/><rect x="32" y="256.20" width="7" height="1.4" fill="#8a8a8a"/><rect x="24" y="263.76" width="15" height="1.4" fill="#8a8a8a"/><rect x="32" y="271.32" width="7" height="1.4" fill="#8a8a8a"/><rect x="32" y="278.87" width="7" height="1.4" fill="#8a8a8a"/><rect x="32" y="286.43" width="7" height="1.4" fill="#8a8a8a"/><rect x="32" y="293.98" width="7" height="1.4" fill="#8a8a8a"/><rect x="16" y="301.54" width="23" height="1.4" fill="#8a8a8a"/><rect x="32" y="309.10" width="7" height="1.4" fill="#8a8a8a"/><rect x="32" y="316.65" width="7" height="1.4" fill="#8a8a8a"/><rect x="32" y="324.21" width="7" height="1.4" fill="#8a8a8a"/><rect x="32" y="331.76" width="7" height="1.4" fill="#8a8a8a"/><rect x="24" y="339.32" width="15" height="1.4" fill="#8a8a8a"/><rect x="32" y="346.88" width="7" height="1.4" fill="#8a8a8a"/><rect x="32" y="354.43" width="7" height="1.4" fill="#8a8a8a"/><rect x="32" y="361.99" width="7" height="1.4" fill="#8a8a8a"/><rect x="32" y="369.54" width="7" height="1.4" fill="#8a8a8a"/><rect x="16" y="377.10" width="23" height="1.4" fill="#8a8a8a"/><rect x="32" y="384.66" width="7" height="1.4" fill="#8a8a8a"/><rect x="32" y="392.21" width="7" height="1.4" fill="#8a8a8a"/><rect x="32" y="399.77" width="7" height="1.4" fill="#8a8a8a"/><rect x="32" y="407.32" width="7" height="1.4" fill="#8a8a8a"/><rect x="24" y="414.88" width="15" height="1.4" fill="#8a8a8a"/><rect x="32" y="422.44" width="7" height="1.4" fill="#8a8a8a"/><rect x="32" y="429.99" width="7" height="1.4" fill="#8a8a8a"/><rect x="32" y="437.55" width="7" height="1.4" fill="#8a8a8a"/><rect x="32" y="445.10" width="7" height="1.4" fill="#8a8a8a"/><rect x="16" y="452.66" width="23" height="1.4" fill="#8a8a8a"/><rect x="32" y="460.22" width="7" height="1.4" fill="#8a8a8a"/><rect x="32" y="467.77" width="7" height="1.4" fill="#8a8a8a"/><rect x="32" y="475.33" width="7" height="1.4" fill="#8a8a8a"/><rect x="32" y="482.88" width="7" height="1.4" fill="#8a8a8a"/><rect x="24" y="490.44" width="15" height="1.4" fill="#8a8a8a"/><rect x="32" y="498.00" width="7" height="1.4" fill="#8a8a8a"/><rect x="32" y="505.55" width="7" height="1.4" fill="#8a8a8a"/><rect x="32" y="513.11" width="7" height="1.4" fill="#8a8a8a"/><rect x="32" y="520.66" width="7" height="1.4" fill="#8a8a8a"/><rect x="16" y="528.22" width="23" height="1.4" fill="#8a8a8a"/><rect x="32" y="535.78" width="7" height="1.4" fill="#8a8a8a"/><rect x="32" y="543.33" width="7" height="1.4" fill="#8a8a8a"/><rect x="32" y="550.89" width="7" height="1.4" fill="#8a8a8a"/><rect x="32" y="558.44" width="7" height="1.4" fill="#8a8a8a"/><rect x="24" y="566.00" width="15" height="1.4" fill="#8a8a8a"/><rect x="32" y="573.56" width="7" height="1.4" fill="#8a8a8a"/><rect x="32" y="581.11" width="7" height="1.4" fill="#8a8a8a"/><rect x="32" y="588.67" width="7" height="1.4" fill="#8a8a8a"/><rect x="32" y="596.22" width="7" height="1.4" fill="#8a8a8a"/><rect x="16" y="603.78" width="23" height="1.4" fill="#8a8a8a"/><rect x="32" y="611.34" width="7" height="1.4" fill="#8a8a8a"/><rect x="32" y="618.89" width="7" height="1.4" fill="#8a8a8a"/><rect x="32" y="626.45" width="7" height="1.4" fill="#8a8a8a"/><rect x="32" y="634.00" width="7" height="1.4" fill="#8a8a8a"/><rect x="24" y="641.56" width="15" height="1.4" fill="#8a8a8a"/><rect x="32" y="649.12" width="7" height="1.4" fill="#8a8a8a"/><rect x="32" y="656.67" width="7" height="1.4" fill="#8a8a8a"/><rect x="32" y="664.23" width="7" height="1.4" fill="#8a8a8a"/><rect x="32" y="671.78" width="7" height="1.4" fill="#8a8a8a"/><rect x="16" y="679.34" width="23" height="1.4" fill="#8a8a8a"/><rect x="32" y="686.90" width="7" height="1.4" fill="#8a8a8a"/><rect x="32" y="694.45" width="7" height="1.4" fill="#8a8a8a"/><rect x="32" y="702.01" width="7" height="1.4" fill="#8a8a8a"/><rect x="32" y="709.56" width="7" height="1.4" fill="#8a8a8a"/><rect x="24" y="717.12" width="15" height="1.4" fill="#8a8a8a"/><rect x="32" y="724.68" width="7" height="1.4" fill="#8a8a8a"/><rect x="32" y="732.23" width="7" height="1.4" fill="#8a8a8a"/><rect x="32" y="739.79" width="7" height="1.4" fill="#8a8a8a"/><rect x="32" y="747.34" width="7" height="1.4" fill="#8a8a8a"/><rect x="16" y="754.90" width="23" height="1.4" fill="#8a8a8a"/><rect x="32" y="762.46" width="7" height="1.4" fill="#8a8a8a"/><rect x="32" y="770.01" width="7" height="1.4" fill="#8a8a8a"/><rect x="32" y="777.57" width="7" height="1.4" fill="#8a8a8a"/><rect x="32" y="785.12" width="7" height="1.4" fill="#8a8a8a"/><rect x="24" y="792.68" width="15" height="1.4" fill="#8a8a8a"/><rect x="32" y="800.24" width="7" height="1.4" fill="#8a8a8a"/><rect x="32" y="807.79" width="7" height="1.4" fill="#8a8a8a"/><rect x="32" y="815.35" width="7" height="1.4" fill="#8a8a8a"/><rect x="32" y="822.90" width="7" height="1.4" fill="#8a8a8a"/><rect x="16" y="830.46" width="23" height="1.4" fill="#8a8a8a"/><rect x="32" y="838.02" width="7" height="1.4" fill="#8a8a8a"/><rect x="32" y="845.57" width="7" height="1.4" fill="#8a8a8a"/><rect x="32" y="853.13" width="7" height="1.4" fill="#8a8a8a"/><rect x="32" y="860.68" width="7" height="1.4" fill="#8a8a8a"/><rect x="24" y="868.24" width="15" height="1.4" fill="#8a8a8a"/><rect x="32" y="875.80" width="7" height="1.4" fill="#8a8a8a"/><rect x="32" y="883.35" width="7" height="1.4" fill="#8a8a8a"/><rect x="32" y="890.91" width="7" height="1.4" fill="#8a8a8a"/><rect x="32" y="898.46" width="7" height="1.4" fill="#8a8a8a"/><rect x="16" y="906.02" width="23" height="1.4" fill="#8a8a8a"/><rect x="32" y="913.58" width="7" height="1.4" fill="#8a8a8a"/><rect x="32" y="921.13" width="7" height="1.4" fill="#8a8a8a"/><rect x="32" y="928.69" width="7" height="1.4" fill="#8a8a8a"/><rect x="32" y="936.24" width="7" height="1.4" fill="#8a8a8a"/><rect x="24" y="943.80" width="15" height="1.4" fill="#8a8a8a"/><rect x="32" y="951.36" width="7" height="1.4" fill="#8a8a8a"/><rect x="32" y="958.91" width="7" height="1.4" fill="#8a8a8a"/><rect x="32" y="966.47" width="7" height="1.4" fill="#8a8a8a"/><rect x="32" y="974.02" width="7" height="1.4" fill="#8a8a8a"/><rect x="16" y="981.58" width="23" height="1.4" fill="#8a8a8a"/><rect x="32" y="989.14" width="7" height="1.4" fill="#8a8a8a"/><rect x="32" y="996.69" width="7" height="1.4" fill="#8a8a8a"/><rect x="32" y="1004.25" width="7" height="1.4" fill="#8a8a8a"/><rect x="32" y="1011.80" width="7" height="1.4" fill="#8a8a8a"/><rect x="24" y="1019.36" width="15" height="1.4" fill="#8a8a8a"/><rect x="32" y="1026.92" width="7" height="1.4" fill="#8a8a8a"/><rect x="32" y="1034.47" width="7" height="1.4" fill="#8a8a8a"/><rect x="32" y="1042.03" width="7" height="1.4" fill="#8a8a8a"/><rect x="32" y="1049.58" width="7" height="1.4" fill="#8a8a8a"/><rect x="16" y="1057.14" width="23" height="1.4" fill="#8a8a8a"/><rect x="32" y="1064.70" width="7" height="1.4" fill="#8a8a8a"/><rect x="32" y="1072.25" width="7" height="1.4" fill="#8a8a8a"/><rect x="32" y="1079.81" width="7" height="1.4" fill="#8a8a8a"/><rect x="32" y="1087.36" width="7" height="1.4" fill="#8a8a8a"/><rect x="24" y="1094.92" width="15" height="1.4" fill="#8a8a8a"/><rect x="32" y="1102.48" width="7" height="1.4" fill="#8a8a8a"/><rect x="32" y="1110.03" width="7" height="1.4" fill="#8a8a8a"/><rect x="32" y="1117.59" width="7" height="1.4" fill="#8a8a8a"/><rect x="32" y="1125.14" width="7" height="1.4" fill="#8a8a8a"/><rect x="16" y="1132.70" width="23" height="1.4" fill="#8a8a8a"/><rect x="32" y="1140.26" width="7" height="1.4" fill="#8a8a8a"/><text transform="translate(21 15) rotate(-90)" font-size="25.5" fill="#8a8a8a" stroke="#8a8a8a" stroke-width="0.55" font-family="Liberation Sans">0</text><text transform="translate(21 75.6) rotate(-90)" font-size="25.5" fill="#8a8a8a" stroke="#8a8a8a" stroke-width="0.55" text-anchor="middle" font-family="Liberation Sans">1</text><text transform="translate(21 151.1) rotate(-90)" font-size="25.5" fill="#8a8a8a" stroke="#8a8a8a" stroke-width="0.55" text-anchor="middle" font-family="Liberation Sans">2</text><text transform="translate(21 226.7) rotate(-90)" font-size="25.5" fill="#8a8a8a" stroke="#8a8a8a" stroke-width="0.55" text-anchor="middle" font-family="Liberation Sans">3</text><text transform="translate(21 302.2) rotate(-90)" font-size="25.5" fill="#8a8a8a" stroke="#8a8a8a" stroke-width="0.55" text-anchor="middle" font-family="Liberation Sans">4</text><text transform="translate(21 377.8) rotate(-90)" font-size="25.5" fill="#8a8a8a" stroke="#8a8a8a" stroke-width="0.55" text-anchor="middle" font-family="Liberation Sans">5</text><text transform="translate(21 453.4) rotate(-90)" font-size="25.5" fill="#8a8a8a" stroke="#8a8a8a" stroke-width="0.55" text-anchor="middle" font-family="Liberation Sans">6</text><text transform="translate(21 528.9) rotate(-90)" font-size="25.5" fill="#8a8a8a" stroke="#8a8a8a" stroke-width="0.55" text-anchor="middle" font-family="Liberation Sans">7</text><text transform="translate(21 604.5) rotate(-90)" font-size="25.5" fill="#8a8a8a" stroke="#8a8a8a" stroke-width="0.55" text-anchor="middle" font-family="Liberation Sans">8</text><text transform="translate(21 680.0) rotate(-90)" font-size="25.5" fill="#8a8a8a" stroke="#8a8a8a" stroke-width="0.55" text-anchor="middle" font-family="Liberation Sans">9</text><text transform="translate(21 755.6) rotate(-90)" font-size="25.5" fill="#8a8a8a" stroke="#8a8a8a" stroke-width="0.55" text-anchor="middle" font-family="Liberation Sans">10</text><text transform="translate(21 831.2) rotate(-90)" font-size="25.5" fill="#8a8a8a" stroke="#8a8a8a" stroke-width="0.55" text-anchor="middle" font-family="Liberation Sans">11</text><text transform="translate(21 906.7) rotate(-90)" font-size="25.5" fill="#8a8a8a" stroke="#8a8a8a" stroke-width="0.55" text-anchor="middle" font-family="Liberation Sans">12</text><text transform="translate(21 982.3) rotate(-90)" font-size="25.5" fill="#8a8a8a" stroke="#8a8a8a" stroke-width="0.55" text-anchor="middle" font-family="Liberation Sans">13</text><text transform="translate(21 1057.8) rotate(-90)" font-size="25.5" fill="#8a8a8a" stroke="#8a8a8a" stroke-width="0.55" text-anchor="middle" font-family="Liberation Sans">14</text><text transform="translate(21 1133.4) rotate(-90)" font-size="25.5" fill="#8a8a8a" stroke="#8a8a8a" stroke-width="0.55" text-anchor="middle" font-family="Liberation Sans">15</text><line x1="0" y1="61.5" x2="38" y2="61.5" stroke="#f00" stroke-width="1.3" stroke-dasharray="6 4"/><line x1="0" y1="736.5" x2="38" y2="736.5" stroke="#f00" stroke-width="1.3" stroke-dasharray="6 4"/></svg>
<div style="left:156px;top:192px;width:40px;height:40px;background:#fff;"></div>
<div style="left:172px;top:231px;width:24px;height:1px;background:#e0e0e0;"></div>
<div style="left:1908px;top:232px;width:2px;height:1144px;background:#ff0000;"></div>
<div style="left:200px;top:1362px;width:1523px;height:12px;background:#a6a6a6;border-radius:6px;"></div>
<div class="t" style="left:778.1px;top:348.0px;font-size:48px;color:#000;word-spacing:3px;">畅捷通打印模板 销货单</div>
<div class="t" style="left:335.9px;top:428.4px;font-size:26.67px;color:#000;letter-spacing:-0.33px;">单据日期：</div>
<div class="t" style="left:480.9px;top:427.5px;font-size:26.67px;color:#000;letter-spacing:-0.33px;"><span style="margin-right:1.5px">[</span><span style="margin-right:2.5px">=</span>单据日期<span style="margin-left:2.5px">]</span></div>
<div class="t" style="left:335.9px;top:474.0px;font-size:26.67px;color:#000;letter-spacing:-0.33px;">客</div>
<div class="t" style="left:396.9px;top:474.0px;font-size:26.67px;color:#000;letter-spacing:-0.33px;">户：</div>
<div class="t" style="left:476.9px;top:475.5px;font-size:26.67px;color:#000;letter-spacing:-0.33px;"><span style="margin-right:1.5px">[</span><span style="margin-right:2.5px">=</span>往来单位名称<span style="margin-left:2.5px">]</span></div>
<div class="t" style="left:859.9px;top:474.0px;font-size:26.67px;color:#000;letter-spacing:-0.33px;">联系电话：</div>
<div class="t" style="left:1014.9px;top:476.0px;font-size:26.67px;color:#000;letter-spacing:-0.33px;"><span style="margin-right:1.5px">[</span><span style="margin-right:2.5px">=</span>主联系人电话号码<span style="margin-left:2.5px">]</span></div>
<div class="t" style="left:1361.9px;top:428.7px;font-size:26.67px;color:#000;letter-spacing:-0.33px;">单据编号：</div>
<div class="t" style="left:1510.4px;top:424.5px;font-size:26.67px;color:#000;letter-spacing:-0.33px;"><span style="margin-right:1.5px">[</span><span style="margin-right:2.5px">=</span>单据编号<span style="margin-left:2.5px">]</span></div>
<div class="t" style="left:1366.9px;top:476.6px;font-size:26.67px;color:#000;letter-spacing:-0.33px;">地</div>
<div class="t" style="left:1402.4px;top:476.6px;font-size:26.67px;color:#000;letter-spacing:-0.33px;">址：</div>
<div class="t" style="left:1474.4px;top:476.6px;font-size:26.67px;color:#000;letter-spacing:-0.33px;"><span style="margin-right:1.5px">[</span><span style="margin-right:2.5px">=</span>主联系人地址<span style="margin-left:2.5px">]</span></div>
<div class="t" style="left:341px;width:106.60000000000002px;top:537.5px;height:34px;font-size:26.67px;color:#000;display:flex;justify-content:center;overflow:hidden;letter-spacing:-0.33px;"><span style="flex:none">行号</span></div>
<div class="t" style="left:341px;width:106.60000000000002px;top:583.2px;height:34px;font-size:26.67px;color:#000;display:flex;justify-content:center;overflow:hidden;letter-spacing:-0.33px;"><span style="flex:none"><span style="margin-right:1.5px">[</span><span style="margin-right:2.5px">=</span>行号<span style="margin-left:2.5px">]</span></span></div>
<div class="t" style="left:449.6px;width:316.0px;top:537.5px;height:34px;font-size:26.67px;color:#000;display:flex;justify-content:center;overflow:hidden;letter-spacing:-0.33px;"><span style="flex:none">商品名称</span></div>
<div class="t" style="left:449.6px;width:316.0px;top:583.2px;height:34px;font-size:26.67px;color:#000;display:flex;justify-content:center;overflow:hidden;letter-spacing:-0.33px;"><span style="flex:none"><span style="margin-right:1.5px">[</span><span style="margin-right:2.5px">=</span>商品名称<span style="margin-left:2.5px">]</span></span></div>
<div class="t" style="left:767.6px;width:176.39999999999998px;top:537.5px;height:34px;font-size:26.67px;color:#000;display:flex;justify-content:center;overflow:hidden;letter-spacing:-0.33px;"><span style="flex:none">商品规格</span></div>
<div class="t" style="left:767.6px;width:176.39999999999998px;top:583.2px;height:34px;font-size:26.67px;color:#000;display:flex;justify-content:center;overflow:hidden;letter-spacing:-0.33px;"><span style="flex:none"><span style="margin-right:1.5px">[</span><span style="margin-right:2.5px">=</span>规格型号<span style="margin-left:2.5px">]</span></span></div>
<div class="t" style="left:946px;width:110px;top:537.5px;height:34px;font-size:26.67px;color:#000;display:flex;justify-content:center;overflow:hidden;letter-spacing:-0.33px;"><span style="flex:none">单位</span></div>
<div class="t" style="left:946px;width:110px;top:583.2px;height:34px;font-size:26.67px;color:#000;display:flex;justify-content:center;overflow:hidden;letter-spacing:-0.33px;"><span style="flex:none"><span style="margin-right:1.5px">[</span><span style="margin-right:2.5px">=</span>名称<span style="margin-left:2.5px">]</span></span></div>
<div class="t" style="left:1058px;width:109.5px;top:537.5px;height:34px;font-size:26.67px;color:#000;display:flex;justify-content:center;overflow:hidden;letter-spacing:-0.33px;"><span style="flex:none">数量</span></div>
<div class="t" style="left:1058px;width:109.5px;top:583.2px;height:34px;font-size:26.67px;color:#000;display:flex;justify-content:center;overflow:hidden;letter-spacing:-0.33px;"><span style="flex:none"><span style="margin-right:1.5px">[</span><span style="margin-right:2.5px">=</span>数量<span style="margin-left:2.5px">]</span></span></div>
<div class="t" style="left:1169.5px;width:152.5px;top:537.5px;height:34px;font-size:26.67px;color:#000;display:flex;justify-content:center;overflow:hidden;letter-spacing:-0.33px;"><span style="flex:none">单价</span></div>
<div class="t" style="left:1169.5px;width:152.5px;top:583.2px;height:34px;font-size:26.67px;color:#000;display:flex;justify-content:center;overflow:hidden;letter-spacing:-0.33px;"><span style="flex:none"><span style="margin-right:1.5px">[</span><span style="margin-right:2.5px">=</span>优惠前单价<span style="margin-left:2.5px">]</span></span></div>
<div class="t" style="left:1324px;width:187.5999999999999px;top:537.5px;height:34px;font-size:26.67px;color:#000;display:flex;justify-content:center;overflow:hidden;letter-spacing:-0.33px;"><span style="flex:none">金额</span></div>
<div class="t" style="left:1324px;width:187.5999999999999px;top:583.2px;height:34px;font-size:26.67px;color:#000;display:flex;justify-content:center;overflow:hidden;letter-spacing:-0.33px;"><span style="flex:none"><span style="margin-right:1.5px">[</span><span style="margin-right:2.5px">=</span>优惠前金额<span style="margin-left:2.5px">]</span></span></div>
<div class="t" style="left:1513.6px;width:276.70000000000005px;top:537.5px;height:34px;font-size:26.67px;color:#000;display:flex;justify-content:center;overflow:hidden;letter-spacing:-0.33px;"><span style="flex:none">备注</span></div>
<div class="t" style="left:1513.6px;width:276.70000000000005px;top:583.2px;height:34px;font-size:26.67px;color:#000;display:flex;justify-content:center;overflow:hidden;letter-spacing:-0.33px;"><span style="flex:none"><span style="margin-right:1.5px">[</span><span style="margin-right:2.5px">=</span>备注<span style="margin-left:2.5px">]</span></span></div>
<div class="t" style="left:480.9px;top:630.5px;font-size:26.67px;color:#000;letter-spacing:-0.33px;">本单上欠：</div>
<div class="t" style="left:626.9px;top:631.0px;font-size:26.67px;color:#000;letter-spacing:-0.33px;"><span style="margin-right:1.5px">[</span><span style="margin-right:2.5px">=</span>往来余额<span style="margin-left:2.5px">]</span></div>
<div class="t" style="left:1182.9px;top:630.5px;font-size:26.67px;color:#000;letter-spacing:-0.33px;">成交金额：</div>
<div class="t" style="left:1328.9px;top:631.0px;font-size:26.67px;color:#000;letter-spacing:-0.33px;"><span style="margin-right:1.5px">[</span><span style="margin-right:2.5px">=</span>成交金额<span style="margin-left:2.5px">]</span></div>
<div class="t" style="left:335.9px;top:679.0px;font-size:26.67px;color:#000;letter-spacing:-0.33px;">地址：北京市海淀区北清路<span style="position:relative;top:-2px;letter-spacing:0.4px">68</span>号用友软件园</div>
<div class="t" style="left:881.9px;top:679.0px;font-size:26.67px;color:#000;letter-spacing:-0.33px;"><span style="position:relative;top:-2px;letter-spacing:0.4px">QQ</span>：<span style="position:relative;top:-2px;letter-spacing:0.4px">393879122</span></div>
<div class="t" style="left:1113.9px;top:678.5px;font-size:26.67px;color:#000;letter-spacing:-0.33px;">微信号：<span style="position:relative;top:-2px;letter-spacing:0.4px">18910888292</span></div>
<div class="t" style="left:1407.9px;top:679.0px;font-size:26.67px;color:#000;letter-spacing:-0.33px;">扫我进店</div>
<div class="t" style="left:334.9px;top:718.7px;font-size:26.67px;color:#000;letter-spacing:-0.33px;">电话：<span style="position:relative;top:-2px;letter-spacing:0.4px">010–62430001</span></div>
<div class="t" style="left:667.9px;top:718.7px;font-size:26.67px;color:#000;letter-spacing:-0.33px;">手机：<span style="position:relative;top:-2px;letter-spacing:0.4px">18910888292</span></div>
<div class="t" style="left:335.9px;top:758.0px;font-size:26.67px;color:#000;letter-spacing:-0.33px;">银行账号：</div>
<div class="t" style="left:470.3px;top:753.9px;font-size:34px;color:#000;letter-spacing:0.25px;">********************</div>
<div class="t" style="left:756.9px;top:758.0px;font-size:26.67px;color:#000;letter-spacing:-0.33px;">户名：</div>
<div class="t" style="left:837.3px;top:753.9px;font-size:34px;color:#000;letter-spacing:0.25px;">****</div>
<div class="t" style="left:335.9px;top:813.8px;font-size:26.67px;color:#000;letter-spacing:-0.33px;">货物当天请验收清楚，产品质量问题请在一个月内退换，逾期概不负责，还望谅解，谢谢合作！</div>
<div class="t" style="left:1287.9px;top:907.5px;font-size:26.67px;color:#000;letter-spacing:-0.33px;"><span style="margin-right:1.5px">[</span><span style="margin-right:2.5px">=</span>页码: 第n页 | 共n页<span style="margin-left:0px">]</span></div>
<svg style="position:absolute;left:1561.7px;top:681.7px;" width="207" height="207" viewBox="0 0 207 207"><g fill="#000" shape-rendering="crispEdges"><rect x="0.00" y="0.00" width="68.90" height="10.10"/><rect x="78.40" y="0.00" width="10.10" height="10.10"/><rect x="117.60" y="0.00" width="10.10" height="10.10"/><rect x="137.20" y="0.00" width="68.90" height="10.10"/><rect x="0.00" y="9.80" width="10.10" height="10.10"/><rect x="58.80" y="9.80" width="10.10" height="10.10"/><rect x="78.40" y="9.80" width="49.30" height="10.10"/><rect x="137.20" y="9.80" width="10.10" height="10.10"/><rect x="196.00" y="9.80" width="10.10" height="10.10"/><rect x="0.00" y="19.60" width="10.10" height="10.10"/><rect x="19.60" y="19.60" width="29.70" height="10.10"/><rect x="58.80" y="19.60" width="10.10" height="10.10"/><rect x="78.40" y="19.60" width="19.90" height="10.10"/><rect x="137.20" y="19.60" width="10.10" height="10.10"/><rect x="156.80" y="19.60" width="29.70" height="10.10"/><rect x="196.00" y="19.60" width="10.10" height="10.10"/><rect x="0.00" y="29.40" width="10.10" height="10.10"/><rect x="19.60" y="29.40" width="29.70" height="10.10"/><rect x="58.80" y="29.40" width="10.10" height="10.10"/><rect x="137.20" y="29.40" width="10.10" height="10.10"/><rect x="156.80" y="29.40" width="29.70" height="10.10"/><rect x="196.00" y="29.40" width="10.10" height="10.10"/><rect x="0.00" y="39.20" width="10.10" height="10.10"/><rect x="19.60" y="39.20" width="29.70" height="10.10"/><rect x="58.80" y="39.20" width="10.10" height="10.10"/><rect x="88.20" y="39.20" width="10.10" height="10.10"/><rect x="107.80" y="39.20" width="10.10" height="10.10"/><rect x="137.20" y="39.20" width="10.10" height="10.10"/><rect x="156.80" y="39.20" width="29.70" height="10.10"/><rect x="196.00" y="39.20" width="10.10" height="10.10"/><rect x="0.00" y="49.00" width="10.10" height="10.10"/><rect x="58.80" y="49.00" width="10.10" height="10.10"/><rect x="78.40" y="49.00" width="19.90" height="10.10"/><rect x="117.60" y="49.00" width="10.10" height="10.10"/><rect x="137.20" y="49.00" width="10.10" height="10.10"/><rect x="196.00" y="49.00" width="10.10" height="10.10"/><rect x="0.00" y="58.80" width="68.90" height="10.10"/><rect x="78.40" y="58.80" width="10.10" height="10.10"/><rect x="98.00" y="58.80" width="10.10" height="10.10"/><rect x="117.60" y="58.80" width="10.10" height="10.10"/><rect x="137.20" y="58.80" width="68.90" height="10.10"/><rect x="78.40" y="68.60" width="19.90" height="10.10"/><rect x="107.80" y="68.60" width="10.10" height="10.10"/><rect x="19.60" y="78.40" width="29.70" height="10.10"/><rect x="58.80" y="78.40" width="10.10" height="10.10"/><rect x="78.40" y="78.40" width="10.10" height="10.10"/><rect x="98.00" y="78.40" width="10.10" height="10.10"/><rect x="127.40" y="78.40" width="29.70" height="10.10"/><rect x="176.40" y="78.40" width="29.70" height="10.10"/><rect x="0.00" y="88.20" width="19.90" height="10.10"/><rect x="29.40" y="88.20" width="29.70" height="10.10"/><rect x="78.40" y="88.20" width="10.10" height="10.10"/><rect x="107.80" y="88.20" width="10.10" height="10.10"/><rect x="127.40" y="88.20" width="29.70" height="10.10"/><rect x="166.60" y="88.20" width="19.90" height="10.10"/><rect x="196.00" y="88.20" width="10.10" height="10.10"/><rect x="0.00" y="98.00" width="19.90" height="10.10"/><rect x="58.80" y="98.00" width="10.10" height="10.10"/><rect x="88.20" y="98.00" width="19.90" height="10.10"/><rect x="117.60" y="98.00" width="19.90" height="10.10"/><rect x="156.80" y="98.00" width="39.50" height="10.10"/><rect x="19.60" y="107.80" width="19.90" height="10.10"/><rect x="68.60" y="107.80" width="29.70" height="10.10"/><rect x="127.40" y="107.80" width="10.10" height="10.10"/><rect x="147.00" y="107.80" width="39.50" height="10.10"/><rect x="0.00" y="117.60" width="68.90" height="10.10"/><rect x="137.20" y="117.60" width="10.10" height="10.10"/><rect x="156.80" y="117.60" width="19.90" height="10.10"/><rect x="186.20" y="117.60" width="10.10" height="10.10"/><rect x="78.40" y="127.40" width="10.10" height="10.10"/><rect x="98.00" y="127.40" width="10.10" height="10.10"/><rect x="127.40" y="127.40" width="10.10" height="10.10"/><rect x="176.40" y="127.40" width="29.70" height="10.10"/><rect x="0.00" y="137.20" width="68.90" height="10.10"/><rect x="137.20" y="137.20" width="19.90" height="10.10"/><rect x="166.60" y="137.20" width="10.10" height="10.10"/><rect x="186.20" y="137.20" width="10.10" height="10.10"/><rect x="0.00" y="147.00" width="10.10" height="10.10"/><rect x="58.80" y="147.00" width="10.10" height="10.10"/><rect x="88.20" y="147.00" width="29.70" height="10.10"/><rect x="127.40" y="147.00" width="19.90" height="10.10"/><rect x="166.60" y="147.00" width="19.90" height="10.10"/><rect x="0.00" y="156.80" width="10.10" height="10.10"/><rect x="19.60" y="156.80" width="29.70" height="10.10"/><rect x="58.80" y="156.80" width="10.10" height="10.10"/><rect x="78.40" y="156.80" width="19.90" height="10.10"/><rect x="107.80" y="156.80" width="10.10" height="10.10"/><rect x="147.00" y="156.80" width="10.10" height="10.10"/><rect x="166.60" y="156.80" width="10.10" height="10.10"/><rect x="186.20" y="156.80" width="10.10" height="10.10"/><rect x="0.00" y="166.60" width="10.10" height="10.10"/><rect x="19.60" y="166.60" width="29.70" height="10.10"/><rect x="58.80" y="166.60" width="10.10" height="10.10"/><rect x="78.40" y="166.60" width="19.90" height="10.10"/><rect x="107.80" y="166.60" width="49.30" height="10.10"/><rect x="166.60" y="166.60" width="19.90" height="10.10"/><rect x="0.00" y="176.40" width="10.10" height="10.10"/><rect x="19.60" y="176.40" width="29.70" height="10.10"/><rect x="58.80" y="176.40" width="10.10" height="10.10"/><rect x="78.40" y="176.40" width="29.70" height="10.10"/><rect x="117.60" y="176.40" width="29.70" height="10.10"/><rect x="156.80" y="176.40" width="10.10" height="10.10"/><rect x="176.40" y="176.40" width="10.10" height="10.10"/><rect x="0.00" y="186.20" width="10.10" height="10.10"/><rect x="58.80" y="186.20" width="10.10" height="10.10"/><rect x="88.20" y="186.20" width="19.90" height="10.10"/><rect x="117.60" y="186.20" width="10.10" height="10.10"/><rect x="137.20" y="186.20" width="29.70" height="10.10"/><rect x="176.40" y="186.20" width="10.10" height="10.10"/><rect x="0.00" y="196.00" width="68.90" height="10.10"/><rect x="88.20" y="196.00" width="10.10" height="10.10"/><rect x="127.40" y="196.00" width="10.10" height="10.10"/><rect x="156.80" y="196.00" width="10.10" height="10.10"/><rect x="176.40" y="196.00" width="19.90" height="10.10"/></g></svg>
<svg style="position:absolute;left:1005px;top:455px;" width="330" height="60" viewBox="0 0 330 60"><rect x="12" y="12" width="306" height="36" fill="none" stroke="#3d74f7" stroke-width="2" stroke-dasharray="6 4"/><rect x="0" y="0" width="12" height="12" fill="#3d74f7"/><rect x="158" y="0" width="12" height="12" fill="#3d74f7"/><rect x="316" y="0" width="12" height="12" fill="#3d74f7"/><rect x="0" y="23" width="12" height="12" fill="#3d74f7"/><rect x="316" y="23" width="12" height="12" fill="#3d74f7"/><rect x="0" y="46" width="12" height="12" fill="#3d74f7"/><rect x="158" y="46" width="12" height="12" fill="#3d74f7"/><rect x="316" y="46" width="12" height="12" fill="#3d74f7"/></svg>
<div style="left:1956px;top:192px;width:2px;height:1184px;background:#9a9a9a;"></div>
<div style="left:1958px;top:192px;width:596px;height:64px;background:#ff8c4a;"></div>
<div class="t" style="left:1977.9px;top:212.5px;font-size:28px;color:#fff;font-weight:bold;">数据源面板</div>
<svg style="position:absolute;left:2496px;top:209px;" width="20" height="28" viewBox="0 0 20 28"><path d="M3 2 L15 14 L3 26" fill="none" stroke="#fff" stroke-width="3.2"/></svg>
<div style="left:1958px;top:256px;width:498px;height:1120px;background:#f2f2f2;"></div>
<div style="left:2456px;top:256px;width:98px;height:1120px;background:#fff;"></div>
<div style="left:2456px;top:392px;width:98px;height:136px;background:#f2f2f2;"></div>
<div style="left:2456px;top:527px;width:98px;height:2px;background:#dedede;"></div>
<div class="t" style="left:1981.0px;top:288.7px;font-size:26px;color:#333;">数据源选择</div>
<div class="t" style="left:2144.0px;top:288.7px;font-size:24px;color:#111;">明细表</div>
<svg style="position:absolute;left:2394px;top:286px;" width="28" height="18" viewBox="0 0 28 18"><path d="M2 2 L13.5 13 L25 2" fill="none" stroke="#ff8c4a" stroke-width="2.6"/></svg>
<div style="left:2142px;top:330px;width:290px;height:2px;background:#d6d6d6;"></div>
<div style="left:1980px;top:364px;width:394px;height:44px;background:#fff;box-sizing:border-box;border:2px solid #9c9c9c;"></div>
<div style="left:2390px;top:364px;width:44px;height:44px;background:#fff;box-sizing:border-box;border:2px solid #9c9c9c;"></div>
<svg style="position:absolute;left:2396px;top:371px;" width="32" height="32" viewBox="0 0 32 32"><circle cx="13.5" cy="13.5" r="9" fill="none" stroke="#2e2e2e" stroke-width="3.6"/><path d="M20 20 L27 27" stroke="#2e2e2e" stroke-width="5" stroke-linecap="round"/></svg>
<div class="t" style="left:1980.0px;top:429.0px;font-size:26px;color:#333;">筛选</div>
<div style="left:2044.5px;top:430.8px;width:23px;height:23px;background:#fff;box-sizing:border-box;border:1.5px solid #c4c4c4;border-radius:5px;"></div>
<div class="t" style="left:2078.0px;top:429.3px;font-size:26px;color:#333;">文本</div>
<div style="left:2172.5px;top:430.8px;width:23px;height:23px;background:#fff;box-sizing:border-box;border:1.5px solid #c4c4c4;border-radius:5px;"></div>
<div class="t" style="left:2206.0px;top:429.3px;font-size:26px;color:#333;">数值</div>
<div style="left:2300.5px;top:430.8px;width:23px;height:23px;background:#fff;box-sizing:border-box;border:1.5px solid #c4c4c4;border-radius:5px;"></div>
<div class="t" style="left:2334.0px;top:429.3px;font-size:26px;color:#333;">开关</div>
<div style="left:2044.5px;top:468px;width:23px;height:23px;background:#fff;box-sizing:border-box;border:1.5px solid #c4c4c4;border-radius:5px;"></div>
<div class="t" style="left:2078.0px;top:466.5px;font-size:26px;color:#333;">日期</div>
<div style="left:2172.5px;top:468px;width:23px;height:23px;background:#fff;box-sizing:border-box;border:1.5px solid #c4c4c4;border-radius:5px;"></div>
<div class="t" style="left:2206.0px;top:466.5px;font-size:26px;color:#333;">其他</div>
<div style="left:1980px;top:522.5px;width:440px;height:54px;background:#c9e0e3;"></div>
<div style="left:1980px;top:576px;width:440px;height:2px;background:#cdcdcd;"></div>
<svg style="position:absolute;left:2000px;top:537.5px;" width="25" height="24" viewBox="0 0 25 24"><rect x="1.5" y="1.5" width="22" height="21" fill="none" stroke="#8c8c8c" stroke-width="3"/><rect x="5" y="10.8" width="15" height="2.6" fill="#8c8c8c"/></svg>
<div class="t" style="left:2040.0px;top:539.4px;font-size:24px;color:#222;">系统常用项目</div>
<div style="left:2420px;top:522px;width:14px;height:99px;background:#ababab;border-radius:7px;"></div>
<svg style="position:absolute;left:2040.7px;top:594.5px;" width="23" height="21" viewBox="0 0 23 21"><g fill="#8a8a8a"><path d="M0 0 H15 V3.2 H9.2 V20 H5.8 V3.2 H0 Z"/><path d="M14.2 8.5 H16.6 L21.8 20.5 H19.2 L18.1 17.6 H12.7 L11.6 20.5 H9 Z M13.5 15.3 H17.3 L15.4 10.8 Z"/></g></svg>
<div class="t" style="left:2080.0px;top:594.5px;font-size:24px;color:#9a9a9a;">打印日期</div>
<svg style="position:absolute;left:2040.7px;top:650.5px;" width="23" height="21" viewBox="0 0 23 21"><g fill="#8a8a8a"><path d="M0 0 H15 V3.2 H9.2 V20 H5.8 V3.2 H0 Z"/><path d="M14.2 8.5 H16.6 L21.8 20.5 H19.2 L18.1 17.6 H12.7 L11.6 20.5 H9 Z M13.5 15.3 H17.3 L15.4 10.8 Z"/></g></svg>
<div class="t" style="left:2080.0px;top:650.5px;font-size:24px;color:#9a9a9a;">打印人</div>
<svg style="position:absolute;left:2040.7px;top:706.5px;" width="23" height="21" viewBox="0 0 23 21"><g fill="#8a8a8a"><path d="M0 0 H15 V3.2 H9.2 V20 H5.8 V3.2 H0 Z"/><path d="M14.2 8.5 H16.6 L21.8 20.5 H19.2 L18.1 17.6 H12.7 L11.6 20.5 H9 Z M13.5 15.3 H17.3 L15.4 10.8 Z"/></g></svg>
<div class="t" style="left:2080.0px;top:706.5px;font-size:24px;color:#9a9a9a;">当前页码</div>
<svg style="position:absolute;left:2040.7px;top:762.5px;" width="23" height="21" viewBox="0 0 23 21"><g fill="#8a8a8a"><path d="M0 0 H15 V3.2 H9.2 V20 H5.8 V3.2 H0 Z"/><path d="M14.2 8.5 H16.6 L21.8 20.5 H19.2 L18.1 17.6 H12.7 L11.6 20.5 H9 Z M13.5 15.3 H17.3 L15.4 10.8 Z"/></g></svg>
<div class="t" style="left:2080.0px;top:762.5px;font-size:24px;color:#9a9a9a;">总页码</div>
<svg style="position:absolute;left:2040.5px;top:818.5px;" width="24" height="22" viewBox="0 0 24 22"><text x="0" y="16" font-size="16" font-weight="bold" font-family="Liberation Sans" fill="#8a8a8a" letter-spacing="-2.6" transform="scale(0.92 1)">123</text><rect x="0" y="19" width="22" height="2" fill="#8a8a8a"/></svg>
<div class="t" style="left:2080.0px;top:818.5px;font-size:24px;color:#9a9a9a;">行号</div>
<svg style="position:absolute;left:2040.7px;top:874.5px;" width="23" height="21" viewBox="0 0 23 21"><g fill="#8a8a8a"><path d="M0 0 H15 V3.2 H9.2 V20 H5.8 V3.2 H0 Z"/><path d="M14.2 8.5 H16.6 L21.8 20.5 H19.2 L18.1 17.6 H12.7 L11.6 20.5 H9 Z M13.5 15.3 H17.3 L15.4 10.8 Z"/></g></svg>
<div class="t" style="left:2080.0px;top:874.5px;font-size:24px;color:#9a9a9a;">页码: n | n</div>
<svg style="position:absolute;left:2040.7px;top:930.5px;" width="23" height="21" viewBox="0 0 23 21"><g fill="#8a8a8a"><path d="M0 0 H15 V3.2 H9.2 V20 H5.8 V3.2 H0 Z"/><path d="M14.2 8.5 H16.6 L21.8 20.5 H19.2 L18.1 17.6 H12.7 L11.6 20.5 H9 Z M13.5 15.3 H17.3 L15.4 10.8 Z"/></g></svg>
<div class="t" style="left:2080.0px;top:930.5px;font-size:24px;color:#9a9a9a;">页码: 第n页 | 共n页</div>
<svg style="position:absolute;left:2040.7px;top:986.5px;" width="23" height="21" viewBox="0 0 23 21"><g fill="#8a8a8a"><path d="M0 0 H15 V3.2 H9.2 V20 H5.8 V3.2 H0 Z"/><path d="M14.2 8.5 H16.6 L21.8 20.5 H19.2 L18.1 17.6 H12.7 L11.6 20.5 H9 Z M13.5 15.3 H17.3 L15.4 10.8 Z"/></g></svg>
<div class="t" style="left:2080.0px;top:986.5px;font-size:24px;color:#9a9a9a;">旺铺分享二维码</div>
<div style="left:1980px;top:1046px;width:440px;height:55px;background:#c9e0e3;"></div>
<div style="left:1980px;top:1100px;width:440px;height:2px;background:#cdcdcd;"></div>
<svg style="position:absolute;left:2000px;top:1061px;" width="25" height="24" viewBox="0 0 25 24"><rect x="1.5" y="1.5" width="22" height="21" fill="none" stroke="#8c8c8c" stroke-width="3"/><rect x="5" y="10.8" width="15" height="2.6" fill="#8c8c8c"/></svg>
<div class="t" style="left:2040.0px;top:1062.7px;font-size:24px;color:#222;">表头表尾详细字段</div>
<div style="left:2252px;top:1056px;width:68px;height:36px;background:#f5a42e;border-radius:8px;"></div>
<div class="t" style="left:2261.5px;top:1062.7px;font-size:24px;color:#111;">主表</div>
<svg style="position:absolute;left:2040.7px;top:1119.6px;" width="23" height="21" viewBox="0 0 23 21"><g fill="#1e96a0"><path d="M0 0 H15 V3.2 H9.2 V20 H5.8 V3.2 H0 Z"/><path d="M14.2 8.5 H16.6 L21.8 20.5 H19.2 L18.1 17.6 H12.7 L11.6 20.5 H9 Z M13.5 15.3 H17.3 L15.4 10.8 Z"/></g></svg>
<div class="t" style="left:2080.0px;top:1119.6px;font-size:24px;color:#1e96a0;">外部订单号</div>
<svg style="position:absolute;left:2040.7px;top:1175.6px;" width="23" height="21" viewBox="0 0 23 21"><g fill="#1e96a0"><path d="M0 0 H15 V3.2 H9.2 V20 H5.8 V3.2 H0 Z"/><path d="M14.2 8.5 H16.6 L21.8 20.5 H19.2 L18.1 17.6 H12.7 L11.6 20.5 H9 Z M13.5 15.3 H17.3 L15.4 10.8 Z"/></g></svg>
<div class="t" style="left:2080.0px;top:1175.6px;font-size:24px;color:#1e96a0;">业务员•员工名称</div>
<svg style="position:absolute;left:2040.5px;top:1231.6px;" width="24" height="22" viewBox="0 0 24 22"><text x="0" y="16" font-size="16" font-weight="bold" font-family="Liberation Sans" fill="#1e96a0" letter-spacing="-2.6" transform="scale(0.92 1)">123</text><rect x="0" y="19" width="22" height="2" fill="#1e96a0"/></svg>
<div class="t" style="left:2080.0px;top:1231.6px;font-size:24px;color:#1e96a0;">抹零</div>
<svg style="position:absolute;left:2042px;top:1286.6px;" width="20" height="26" viewBox="0 0 20 26"><g fill="none" stroke="#1e96a0" stroke-width="2.6"><path d="M6 17 C6 13 2 11.5 2 8 A8 8 0 0 1 18 8 C18 11.5 14 13 14 17 Z"/><path d="M6.5 21.5 H13.5"/><path d="M10 9 V15"/></g></svg>
<div class="t" style="left:2080.0px;top:1287.6px;font-size:24px;color:#1e96a0;">优惠券</div>
<svg style="position:absolute;left:2040.7px;top:1343.6px;" width="23" height="21" viewBox="0 0 23 21"><g fill="#1e96a0"><path d="M0 0 H15 V3.2 H9.2 V20 H5.8 V3.2 H0 Z"/><path d="M14.2 8.5 H16.6 L21.8 20.5 H19.2 L18.1 17.6 H12.7 L11.6 20.5 H9 Z M13.5 15.3 H17.3 L15.4 10.8 Z"/></g></svg>
<div class="t" style="left:2080.0px;top:1343.6px;font-size:24px;color:#1e96a0;">来源单据</div>
<svg style="position:absolute;left:2472px;top:267.8px;" width="68" height="68" viewBox="0 0 68 68"><circle cx="34" cy="34" r="33.8" fill="#dcdcdc"/><g fill="none" stroke="#666" stroke-width="3"><rect x="19" y="20.5" width="30.5" height="26"/></g><g fill="#666"><rect x="19.5" y="25.5" width="29" height="2.2"/><rect x="38" y="22.6" width="2" height="1.8"/><rect x="41.5" y="22.6" width="2" height="1.8"/><rect x="45" y="22.6" width="2" height="1.8"/><rect x="24" y="31" width="11" height="2.2"/><rect x="24" y="35" width="11" height="2.2"/><rect x="24" y="39.5" width="20" height="2.2"/></g><rect x="37.3" y="31.3" width="6.5" height="5.6" fill="none" stroke="#666" stroke-width="2"/></svg>
<div class="t" style="left:2483.1px;top:351.5px;font-size:23px;color:#555;">属性</div>
<svg style="position:absolute;left:2472px;top:403.6px;" width="68" height="68" viewBox="0 0 68 68"><circle cx="34" cy="34" r="33.8" fill="#ff8c4a"/><g fill="none" stroke="#fff" stroke-width="2.6"><rect x="15.7" y="17.7" width="35.6" height="24"/></g><g fill="#fff"><rect x="22.3" y="33" width="3" height="6.5"/><rect x="30" y="29" width="3" height="10.5"/><rect x="37.8" y="23" width="3" height="16.5"/><rect x="43.8" y="28" width="3" height="11.5"/><rect x="25.7" y="44.6" width="17" height="3.6"/><rect x="16.7" y="49" width="34.4" height="3.5" rx="1.2"/></g></svg>
<div class="t" style="left:2472.1px;top:488.0px;font-size:23px;color:#555;">数据源</div>
<svg style="position:absolute;left:2472px;top:542px;" width="68" height="68" viewBox="0 0 68 68"><circle cx="34" cy="34" r="33.8" fill="#dcdcdc"/><g fill="none" stroke="#666" stroke-width="3"><rect x="19" y="20.5" width="30.5" height="26"/></g><g fill="#666"><rect x="19.5" y="25.5" width="29" height="2.2"/><rect x="38" y="22.6" width="2" height="1.8"/><rect x="41.5" y="22.6" width="2" height="1.8"/><rect x="45" y="22.6" width="2" height="1.8"/><rect x="24" y="31" width="11" height="2.2"/><rect x="24" y="35" width="11" height="2.2"/><rect x="24" y="39.5" width="20" height="2.2"/></g><rect x="37.3" y="31.3" width="6.5" height="5.6" fill="none" stroke="#666" stroke-width="2"/></svg>
<div class="t" style="left:2461.1px;top:625.0px;font-size:23px;color:#555;">纸张设置</div>
<svg style="position:absolute;left:2472px;top:677.6px;" width="68" height="68" viewBox="0 0 68 68"><circle cx="34" cy="34" r="33.8" fill="#dcdcdc"/><g fill="none" stroke="#666" stroke-width="3"><rect x="18.5" y="18.5" width="12" height="12"/><rect x="37.5" y="18.5" width="12" height="12"/><rect x="18.5" y="37.5" width="12" height="12"/><rect x="37.5" y="37.5" width="12" height="12"/></g></svg>
<div class="t" style="left:2461.1px;top:761.0px;font-size:23px;color:#555;">元素布局</div>
<svg style="position:absolute;left:2472px;top:814px;" width="68" height="68" viewBox="0 0 68 68"><circle cx="34" cy="34" r="33.8" fill="#dcdcdc"/><path d="M29.40 18.88 A4.6 4.6 0 0 0 38.60 18.88 A15.8 15.8 0 0 1 44.79 22.46 A4.6 4.6 0 0 0 49.39 30.43 A15.8 15.8 0 0 1 49.39 37.57 A4.6 4.6 0 0 0 44.79 45.54 A15.8 15.8 0 0 1 38.60 49.12 A4.6 4.6 0 0 0 29.40 49.12 A15.8 15.8 0 0 1 23.21 45.54 A4.6 4.6 0 0 0 18.61 37.57 A15.8 15.8 0 0 1 18.61 30.43 A4.6 4.6 0 0 0 23.21 22.46 A15.8 15.8 0 0 1 29.40 18.88 Z" fill="none" stroke="#666" stroke-width="3" stroke-linejoin="miter"/><circle cx="34" cy="34" r="4.6" fill="none" stroke="#666" stroke-width="3"/></svg>
<div class="t" style="left:2461.1px;top:897.0px;font-size:23px;color:#555;">打印设置</div>
</body></html>
